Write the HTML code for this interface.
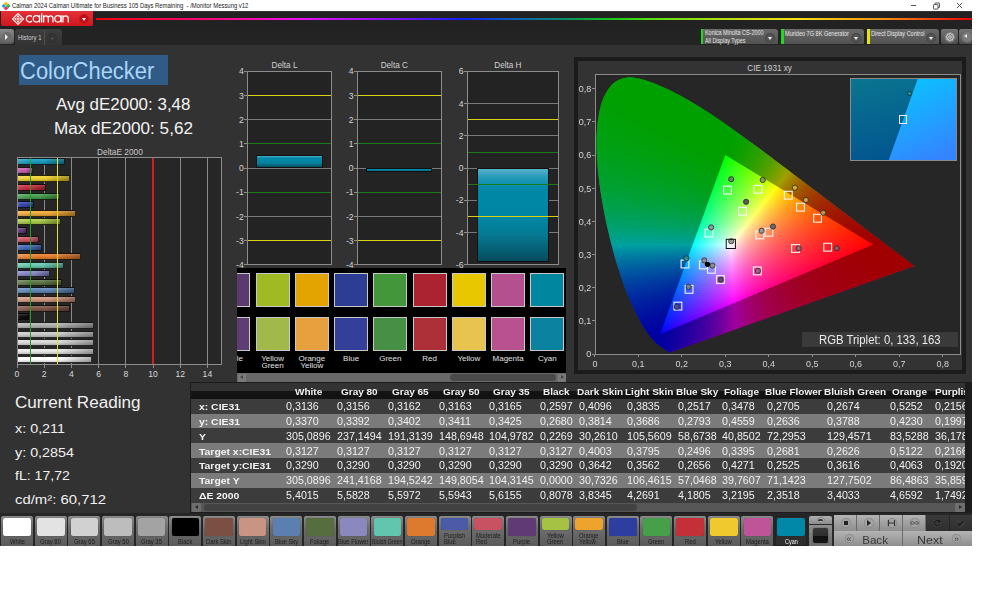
<!DOCTYPE html>
<html><head><meta charset="utf-8">
<style>
*{box-sizing:border-box;margin:0;padding:0}
html,body{width:1000px;height:600px;overflow:hidden;background:#fff;font-family:"Liberation Sans",sans-serif}
.a{position:absolute}
.t{position:absolute;white-space:nowrap;line-height:1;transform-origin:0 0}
#app{position:absolute;left:0;top:0;width:972px;height:546px;overflow:hidden}
.dd{position:absolute;top:29px;height:15.4px;background:linear-gradient(#6a6a6a,#525252);border-radius:0 3px 0 0}
.ddc{position:absolute;width:10px;height:10px;border-radius:50%;background:radial-gradient(#555 40%,#444 70%,#5d5d5d)}
.tri{position:absolute;width:0;height:0;border-left:2.5px solid transparent;border-right:2.5px solid transparent;border-top:3px solid #eee}
.bar{position:absolute;height:7px;border:1px solid rgba(0,0,0,.8)}
.gl{position:absolute;height:1px}
.gv{position:absolute;width:1px}
.sw{position:absolute;top:515.5px;width:32px;height:30.5px;background:linear-gradient(#8c8c8c,#6e6e6e 40%,#5a5a5a);border-radius:2px 2px 0 0}
.swc{position:absolute;left:2.3px;top:2.8px;width:27.5px;height:18.2px;border-radius:2px;box-shadow:0 0 1px rgba(0,0,0,.5)}
.btn{position:absolute;background:linear-gradient(#b4b4b4,#8e8e8e);border-right:1px solid #6a6a6a}
</style></head><body>

<div class="a" style="left:0;top:0;width:1000px;height:11px;background:#fff"></div>
<svg class="a" style="left:1px;top:1px" width="10" height="10" viewBox="0 0 10 10">
<path d="M5 0.5 L7.3 2.8 L5 5 L2.7 2.8Z" fill="#f7c600"/>
<path d="M7.3 2.8 L9.6 5 L7.3 7.3 L5 5Z" fill="#3cb44a"/>
<path d="M5 5 L7.3 7.3 L5 9.6 L2.7 7.3Z" fill="#e8336e"/>
<path d="M2.7 2.8 L5 5 L2.7 7.3 L0.4 5Z" fill="#2aa8e0"/>
</svg>
<div class="t" style="left:11.80px;top:2.00px;font-size:7.2px;color:#202020;transform:scaleX(0.8230);">Calman 2024 Calman Ultimate for Business 105 Days Remaining&nbsp;&nbsp;- /Monitor Messung v12</div>
<div class="a" style="left:911px;top:4.8px;width:4.6px;height:0.9px;background:#555"></div>
<svg class="a" style="left:932px;top:2px" width="9" height="8"><path d="M3 2.6V1.5Q3 1 3.5 1H7Q7.5 1 7.5 1.5V5Q7.5 5.5 7 5.5H6" fill="none" stroke="#444" stroke-width="0.9"/><rect x="1.5" y="2.6" width="4.5" height="4.5" rx="0.6" fill="none" stroke="#444" stroke-width="0.9"/></svg>
<svg class="a" style="left:955.5px;top:2px" width="8" height="7"><path d="M0.8 0.8L6.2 6.2M6.2 0.8L0.8 6.2" stroke="#444" stroke-width="0.9"/></svg>

<div id="app">
<div class="a" style="left:0;top:11px;width:972px;height:535px;background:#323232"></div>
<div class="a" style="left:0;top:11.5px;width:972px;height:17px;background:#222"></div>
<div class="a" style="left:0.5px;top:11.3px;width:92px;height:15.2px;background:linear-gradient(#e23238,#d0161c);border-radius:0 0 2px 2px"></div>
<svg class="a" style="left:11.5px;top:12.9px" width="12" height="12" viewBox="0 0 12 12">
<g transform="rotate(45 6 6)"><rect x="2.1" y="2.1" width="7.8" height="7.8" fill="none" stroke="#fff" stroke-width="1"/>
<rect x="3.2" y="3.2" width="1.8" height="1.8" fill="#fff"/><rect x="7" y="3.2" width="1.8" height="1.8" fill="#fff"/><rect x="3.2" y="7" width="1.8" height="1.8" fill="#fff"/><rect x="7" y="7" width="1.8" height="1.8" fill="#fff"/><rect x="5.1" y="5.1" width="1.8" height="1.8" fill="#fff"/>
<rect x="5.1" y="3.2" width="1.8" height="1.8" fill="#f4c4c4" opacity=".5"/><rect x="3.2" y="5.1" width="1.8" height="1.8" fill="#f4c4c4" opacity=".5"/><rect x="7" y="5.1" width="1.8" height="1.8" fill="#f4c4c4" opacity=".5"/><rect x="5.1" y="7" width="1.8" height="1.8" fill="#f4c4c4" opacity=".5"/>
</g></svg>
<svg class="a" style="left:0;top:0" width="80" height="30"><g fill="none" stroke="#fff" stroke-width="1.2"><path d="M31.9 16.7 A3.2 3.2 0 1 0 31.9 21.0"/><circle cx="36.4" cy="18.85" r="3.2"/><path d="M39.6 15.2V22.5"/><path d="M41.7 13.2V22.5"/><path d="M43.65 15.2V22.5M43.65 18.1A2.325 2.325 0 0 1 48.3 18.1V22.5M48.3 18.1A2.325 2.325 0 0 1 52.95 18.1V22.5"/><circle cx="57.95" cy="18.85" r="3.2"/><path d="M61.15 15.2V22.5"/><path d="M62.95 15.2V22.5M62.95 18.5A2.65 2.65 0 0 1 68.25 18.5V22.5"/></g></svg>
<div class="a" style="left:79px;top:14px;width:10px;height:10px;border-radius:50%;background:radial-gradient(#c01015 50%,#d82a30)"></div>
<div class="tri" style="left:81.5px;top:18px;border-top-color:#fff"></div>
<div class="a" style="left:96px;top:18.2px;width:876px;height:2.3px;background:linear-gradient(90deg,#f00008 0%,#ff0890 15%,#f010f0 23%,#9010ff 33%,#1020ff 42%,#0860b8 48%,#0a8a70 53%,#10c020 58%,#50e010 63%,#b0e010 71%,#f8e010 80%,#f89010 90%,#f00008 100%)"></div>

<div class="a" style="left:0;top:28px;width:972px;height:16.6px;background:#232323"></div>
<div class="a" style="left:0;top:29.2px;width:13.6px;height:14.4px;background:linear-gradient(#8a8a8a,#5a5a5a);border-radius:0 3px 3px 0"></div>
<div class="a" style="left:1.5px;top:31.5px;width:10px;height:10px;border-radius:50%;background:radial-gradient(#6a6a6a 50%,#7a7a7a)"></div>
<div class="a" style="left:5px;top:33.5px;width:0;height:0;border-top:3px solid transparent;border-bottom:3px solid transparent;border-left:3.5px solid #eee"></div>
<div class="a" style="left:15.2px;top:29px;width:46.5px;height:15.6px;background:linear-gradient(#3e3e3e,#343434);border-radius:3px 3px 0 0"></div>
<div class="t" style="left:18.00px;top:34.20px;font-size:7.5px;color:#cfcfcf;transform:scaleX(0.7942);">History 1</div>
<div class="a" style="left:44.3px;top:30px;width:1px;height:14.5px;background:#505050"></div>
<div class="a" style="left:47px;top:33px;width:10px;height:10px;border-radius:50%;background:radial-gradient(#333 50%,#2a2a2a)"></div>
<div class="t" style="left:50.5px;top:35px;font-size:6px;color:#666">+</div>

<div class="dd" style="left:700.5px;width:77.5px"></div>
<div class="a" style="left:700.5px;top:29px;width:2.5px;height:15.4px;background:#22d822"></div>
<div class="t" style="left:704.50px;top:30.30px;font-size:6.6px;color:#e6e6e6;transform:scaleX(0.8219);">Konica Minolta CS-2000</div>
<div class="t" style="left:704.50px;top:38.20px;font-size:6.6px;color:#e6e6e6;transform:scaleX(0.8078);">All Display Types</div>
<div class="ddc" style="left:765px;top:32.6px"></div><div class="tri" style="left:767.5px;top:36.6px"></div>
<div class="dd" style="left:781px;width:82.6px"></div>
<div class="a" style="left:781px;top:29px;width:2.5px;height:15.4px;background:#22d822"></div>
<div class="t" style="left:785.00px;top:30.50px;font-size:6.6px;color:#e6e6e6;transform:scaleX(0.8428);">Murideo 7G 8K Generator</div>
<div class="ddc" style="left:851px;top:32.6px"></div><div class="tri" style="left:853.5px;top:36.6px"></div>
<div class="dd" style="left:867px;width:72.4px"></div>
<div class="a" style="left:867px;top:29px;width:2.5px;height:15.4px;background:#e6e600"></div>
<div class="t" style="left:871.00px;top:30.50px;font-size:6.6px;color:#e6e6e6;transform:scaleX(0.8383);">Direct Display Control</div>
<div class="ddc" style="left:926px;top:32.6px"></div><div class="tri" style="left:928.5px;top:36.6px"></div>
<div class="a" style="left:941px;top:29px;width:17px;height:15px;background:linear-gradient(#747474,#4e4e4e);border-radius:2px"></div>
<div class="a" style="left:943.5px;top:31px;width:12px;height:12px;border-radius:50%;background:radial-gradient(#7a7a7a 50%,#5e5e5e 75%,#7a7a7a)"></div><svg class="a" style="left:944.5px;top:32px" width="10" height="10" viewBox="0 0 10 10"><path d="M8.90 5.00 L8.83 5.76 L7.68 6.11 L7.41 6.61 L7.76 7.76 L7.17 8.24 L6.11 7.68 L5.57 7.84 L5.00 8.90 L4.24 8.83 L3.89 7.68 L3.39 7.41 L2.24 7.76 L1.76 7.17 L2.32 6.11 L2.16 5.57 L1.10 5.00 L1.17 4.24 L2.32 3.89 L2.59 3.39 L2.24 2.24 L2.83 1.76 L3.89 2.32 L4.43 2.16 L5.00 1.10 L5.76 1.17 L6.11 2.32 L6.61 2.59 L7.76 2.24 L8.24 2.83 L7.68 3.89 L7.84 4.43Z" fill="none" stroke="#e0e0e0" stroke-width="0.9"/><circle cx="5" cy="5" r="1.3" fill="none" stroke="#e0e0e0" stroke-width="0.8"/></svg>
<div class="a" style="left:959px;top:29px;width:14px;height:15px;background:linear-gradient(#747474,#4e4e4e);border-radius:2px 0 0 2px"></div>
<div class="a" style="left:960.5px;top:31px;width:12px;height:12px;border-radius:50%;background:radial-gradient(#7a7a7a 50%,#5e5e5e 75%,#7a7a7a)"></div><div class="a" style="left:963.5px;top:34.2px;width:0;height:0;border-top:2.8px solid transparent;border-bottom:2.8px solid transparent;border-right:3.4px solid #e8e8e8"></div>

<div class="a" style="left:19px;top:54.8px;width:148.8px;height:30.1px;background:#2f5b86"></div>
<div class="t" style="left:19.80px;top:59.50px;font-size:23px;color:#a9d5fb;transform:scaleX(0.9558);">ColorChecker</div>
<div class="t" style="left:56.30px;top:97.00px;font-size:15.6px;color:#f2f2f2;transform:scaleX(1.0869);">Avg dE2000: 3,48</div>
<div class="t" style="left:54.20px;top:120.50px;font-size:15.6px;color:#f2f2f2;transform:scaleX(1.0977);">Max dE2000: 5,62</div>
<div class="t" style="left:96.90px;top:147.60px;font-size:9.2px;color:#c8c8c8;transform:scaleX(0.9064);">DeltaE 2000</div>
<div class="a" style="left:17.0px;top:157.5px;width:204.5px;height:207.0px;background:#262626"></div>
<div class="gv" style="left:43.7px;top:157.5px;height:207.0px;background:#8a8a8a"></div>
<div class="gv" style="left:70.9px;top:157.5px;height:207.0px;background:#8a8a8a"></div>
<div class="gv" style="left:98.1px;top:157.5px;height:207.0px;background:#8a8a8a"></div>
<div class="gv" style="left:125.3px;top:157.5px;height:207.0px;background:#8a8a8a"></div>
<div class="gv" style="left:179.7px;top:157.5px;height:207.0px;background:#8a8a8a"></div>
<div class="gv" style="left:206.9px;top:157.5px;height:207.0px;background:#8a8a8a"></div>
<div class="bar" style="left:17.3px;top:158.10px;width:48.0px;border-left:none;background:linear-gradient(rgba(255,255,255,.16),rgba(255,255,255,0) 45%,rgba(0,0,0,.18)),linear-gradient(90deg,color-mix(in srgb,#1a9cc0 85%,#fff),#1a9cc0 30%,#1a9cc0 55%,color-mix(in srgb,#1a9cc0 68%,#000));"></div>
<div class="bar" style="left:17.3px;top:166.72px;width:15.5px;border-left:none;background:linear-gradient(rgba(255,255,255,.16),rgba(255,255,255,0) 45%,rgba(0,0,0,.18)),linear-gradient(90deg,color-mix(in srgb,#c860b0 85%,#fff),#c860b0 30%,#c860b0 55%,color-mix(in srgb,#c860b0 68%,#000));"></div>
<div class="bar" style="left:17.3px;top:175.35px;width:52.5px;border-left:none;background:linear-gradient(rgba(255,255,255,.16),rgba(255,255,255,0) 45%,rgba(0,0,0,.18)),linear-gradient(90deg,color-mix(in srgb,#f0d030 85%,#fff),#f0d030 30%,#f0d030 55%,color-mix(in srgb,#f0d030 68%,#000));"></div>
<div class="bar" style="left:17.3px;top:183.97px;width:28.3px;border-left:none;background:linear-gradient(rgba(255,255,255,.16),rgba(255,255,255,0) 45%,rgba(0,0,0,.18)),linear-gradient(90deg,color-mix(in srgb,#c83040 85%,#fff),#c83040 30%,#c83040 55%,color-mix(in srgb,#c83040 68%,#000));"></div>
<div class="bar" style="left:17.3px;top:192.60px;width:43.0px;border-left:none;background:linear-gradient(rgba(255,255,255,.16),rgba(255,255,255,0) 45%,rgba(0,0,0,.18)),linear-gradient(90deg,color-mix(in srgb,#48a050 85%,#fff),#48a050 30%,#48a050 55%,color-mix(in srgb,#48a050 68%,#000));"></div>
<div class="bar" style="left:17.3px;top:201.22px;width:17.1px;border-left:none;background:linear-gradient(rgba(255,255,255,.16),rgba(255,255,255,0) 45%,rgba(0,0,0,.18)),linear-gradient(90deg,color-mix(in srgb,#3848b0 85%,#fff),#3848b0 30%,#3848b0 55%,color-mix(in srgb,#3848b0 68%,#000));"></div>
<div class="bar" style="left:17.3px;top:209.85px;width:58.7px;border-left:none;background:linear-gradient(rgba(255,255,255,.16),rgba(255,255,255,0) 45%,rgba(0,0,0,.18)),linear-gradient(90deg,color-mix(in srgb,#f0a838 85%,#fff),#f0a838 30%,#f0a838 55%,color-mix(in srgb,#f0a838 68%,#000));"></div>
<div class="bar" style="left:17.3px;top:218.47px;width:43.5px;border-left:none;background:linear-gradient(rgba(255,255,255,.16),rgba(255,255,255,0) 45%,rgba(0,0,0,.18)),linear-gradient(90deg,color-mix(in srgb,#a8c848 85%,#fff),#a8c848 30%,#a8c848 55%,color-mix(in srgb,#a8c848 68%,#000));"></div>
<div class="bar" style="left:17.3px;top:227.10px;width:9.9px;border-left:none;background:linear-gradient(rgba(255,255,255,.16),rgba(255,255,255,0) 45%,rgba(0,0,0,.18)),linear-gradient(90deg,color-mix(in srgb,#684080 85%,#fff),#684080 30%,#684080 55%,color-mix(in srgb,#684080 68%,#000));"></div>
<div class="bar" style="left:17.3px;top:235.72px;width:21.7px;border-left:none;background:linear-gradient(rgba(255,255,255,.16),rgba(255,255,255,0) 45%,rgba(0,0,0,.18)),linear-gradient(90deg,color-mix(in srgb,#d05868 85%,#fff),#d05868 30%,#d05868 55%,color-mix(in srgb,#d05868 68%,#000));"></div>
<div class="bar" style="left:17.3px;top:244.35px;width:24.6px;border-left:none;background:linear-gradient(rgba(255,255,255,.16),rgba(255,255,255,0) 45%,rgba(0,0,0,.18)),linear-gradient(90deg,color-mix(in srgb,#4868b8 85%,#fff),#4868b8 30%,#4868b8 55%,color-mix(in srgb,#4868b8 68%,#000));"></div>
<div class="bar" style="left:17.3px;top:252.97px;width:64.2px;border-left:none;background:linear-gradient(rgba(255,255,255,.16),rgba(255,255,255,0) 45%,rgba(0,0,0,.18)),linear-gradient(90deg,color-mix(in srgb,#e88030 85%,#fff),#e88030 30%,#e88030 55%,color-mix(in srgb,#e88030 68%,#000));"></div>
<div class="bar" style="left:17.3px;top:261.60px;width:47.1px;border-left:none;background:linear-gradient(rgba(255,255,255,.16),rgba(255,255,255,0) 45%,rgba(0,0,0,.18)),linear-gradient(90deg,color-mix(in srgb,#68c8b0 85%,#fff),#68c8b0 30%,#68c8b0 55%,color-mix(in srgb,#68c8b0 68%,#000));"></div>
<div class="bar" style="left:17.3px;top:270.23px;width:32.8px;border-left:none;background:linear-gradient(rgba(255,255,255,.16),rgba(255,255,255,0) 45%,rgba(0,0,0,.18)),linear-gradient(90deg,color-mix(in srgb,#8888c8 85%,#fff),#8888c8 30%,#8888c8 55%,color-mix(in srgb,#8888c8 68%,#000));"></div>
<div class="bar" style="left:17.3px;top:278.85px;width:44.6px;border-left:none;background:linear-gradient(rgba(255,255,255,.16),rgba(255,255,255,0) 45%,rgba(0,0,0,.18)),linear-gradient(90deg,color-mix(in srgb,#607848 85%,#fff),#607848 30%,#607848 55%,color-mix(in srgb,#607848 68%,#000));"></div>
<div class="bar" style="left:17.3px;top:287.48px;width:57.7px;border-left:none;background:linear-gradient(rgba(255,255,255,.16),rgba(255,255,255,0) 45%,rgba(0,0,0,.18)),linear-gradient(90deg,color-mix(in srgb,#6088b8 85%,#fff),#6088b8 30%,#6088b8 55%,color-mix(in srgb,#6088b8 68%,#000));"></div>
<div class="bar" style="left:17.3px;top:296.10px;width:58.9px;border-left:none;background:linear-gradient(rgba(255,255,255,.16),rgba(255,255,255,0) 45%,rgba(0,0,0,.18)),linear-gradient(90deg,color-mix(in srgb,#d09880 85%,#fff),#d09880 30%,#d09880 55%,color-mix(in srgb,#d09880 68%,#000));"></div>
<div class="bar" style="left:17.3px;top:304.73px;width:52.9px;border-left:none;background:linear-gradient(rgba(255,255,255,.16),rgba(255,255,255,0) 45%,rgba(0,0,0,.18)),linear-gradient(90deg,color-mix(in srgb,#805848 85%,#fff),#805848 30%,#805848 55%,color-mix(in srgb,#805848 68%,#000));"></div>
<div class="bar" style="left:17.3px;top:313.35px;width:11.8px;border-left:none;background:linear-gradient(rgba(255,255,255,.16),rgba(255,255,255,0) 45%,rgba(0,0,0,.18)),linear-gradient(90deg,color-mix(in srgb,#111111 85%,#fff),#111111 30%,#111111 55%,color-mix(in srgb,#111111 68%,#000));"></div>
<div class="bar" style="left:17.3px;top:321.98px;width:77.2px;border-left:none;background:linear-gradient(rgba(255,255,255,.16),rgba(255,255,255,0) 45%,rgba(0,0,0,.18)),linear-gradient(90deg,color-mix(in srgb,#b0b0b0 85%,#fff),#b0b0b0 30%,#b0b0b0 55%,color-mix(in srgb,#b0b0b0 68%,#000));"></div>
<div class="bar" style="left:17.3px;top:330.60px;width:76.9px;border-left:none;background:linear-gradient(rgba(255,255,255,.16),rgba(255,255,255,0) 45%,rgba(0,0,0,.18)),linear-gradient(90deg,color-mix(in srgb,#c8c8c8 85%,#fff),#c8c8c8 30%,#c8c8c8 55%,color-mix(in srgb,#c8c8c8 68%,#000));"></div>
<div class="bar" style="left:17.3px;top:339.23px;width:76.9px;border-left:none;background:linear-gradient(rgba(255,255,255,.16),rgba(255,255,255,0) 45%,rgba(0,0,0,.18)),linear-gradient(90deg,color-mix(in srgb,#d8d8d8 85%,#fff),#d8d8d8 30%,#d8d8d8 55%,color-mix(in srgb,#d8d8d8 68%,#000));"></div>
<div class="bar" style="left:17.3px;top:347.85px;width:76.7px;border-left:none;background:linear-gradient(rgba(255,255,255,.16),rgba(255,255,255,0) 45%,rgba(0,0,0,.18)),linear-gradient(90deg,color-mix(in srgb,#e8e8e8 85%,#fff),#e8e8e8 30%,#e8e8e8 55%,color-mix(in srgb,#e8e8e8 68%,#000));"></div>
<div class="bar" style="left:17.3px;top:356.48px;width:74.3px;border-left:none;background:linear-gradient(rgba(255,255,255,.16),rgba(255,255,255,0) 45%,rgba(0,0,0,.18)),linear-gradient(90deg,color-mix(in srgb,#ffffff 85%,#fff),#ffffff 30%,#ffffff 55%,color-mix(in srgb,#ffffff 68%,#000));"></div>
<div class="gv" style="left:29.9px;top:157.5px;height:207.0px;width:1.4px;background:#20a020"></div>
<div class="gv" style="left:57.1px;top:157.5px;height:207.0px;width:1.4px;background:#e8e020"></div>
<div class="gv" style="left:152.3px;top:157.5px;height:207.0px;width:1.4px;background:#d02020"></div>
<div class="a" style="left:16.5px;top:157.0px;width:205.5px;height:208.0px;border:1px solid #8c8c8c;border-left-color:#8c8c8c"></div>
<div class="gv" style="left:16.5px;top:364.5px;height:3px;background:#8c8c8c"></div>
<div class="t" style="left:14.61px;top:370.00px;font-size:8.6px;color:#d8d8d8;">0</div>
<div class="gv" style="left:43.7px;top:364.5px;height:3px;background:#8c8c8c"></div>
<div class="t" style="left:41.81px;top:370.00px;font-size:8.6px;color:#d8d8d8;">2</div>
<div class="gv" style="left:70.9px;top:364.5px;height:3px;background:#8c8c8c"></div>
<div class="t" style="left:69.01px;top:370.00px;font-size:8.6px;color:#d8d8d8;">4</div>
<div class="gv" style="left:98.1px;top:364.5px;height:3px;background:#8c8c8c"></div>
<div class="t" style="left:96.21px;top:370.00px;font-size:8.6px;color:#d8d8d8;">6</div>
<div class="gv" style="left:125.3px;top:364.5px;height:3px;background:#8c8c8c"></div>
<div class="t" style="left:123.41px;top:370.00px;font-size:8.6px;color:#d8d8d8;">8</div>
<div class="gv" style="left:152.5px;top:364.5px;height:3px;background:#8c8c8c"></div>
<div class="t" style="left:148.22px;top:370.00px;font-size:8.6px;color:#d8d8d8;">10</div>
<div class="gv" style="left:179.7px;top:364.5px;height:3px;background:#8c8c8c"></div>
<div class="t" style="left:175.42px;top:370.00px;font-size:8.6px;color:#d8d8d8;">12</div>
<div class="gv" style="left:206.9px;top:364.5px;height:3px;background:#8c8c8c"></div>
<div class="t" style="left:202.62px;top:370.00px;font-size:8.6px;color:#d8d8d8;">14</div>
<div class="t" style="left:14.50px;top:395.00px;font-size:16px;color:#f0f0f0;transform:scaleX(1.0690);">Current Reading</div>
<div class="t" style="left:14.50px;top:421.50px;font-size:13.3px;color:#f0f0f0;transform:scaleX(1.0791);">x: 0,211</div>
<div class="t" style="left:14.50px;top:446.00px;font-size:13.3px;color:#f0f0f0;transform:scaleX(1.0782);">y: 0,2854</div>
<div class="t" style="left:14.50px;top:469.30px;font-size:13.3px;color:#f0f0f0;transform:scaleX(1.0586);">fL: 17,72</div>
<div class="t" style="left:14.50px;top:492.70px;font-size:13.3px;color:#f0f0f0;transform:scaleX(1.1190);">cd/m²: 60,712</div>
<div class="a" style="left:247.4px;top:71.0px;width:84.1px;height:193.60000000000002px;background:#232323"></div>
<div class="gl" style="left:247.4px;top:119.2px;width:84.1px;background:#7a7a7a"></div>
<div class="gl" style="left:247.4px;top:167.6px;width:84.1px;background:#7a7a7a"></div>
<div class="gl" style="left:247.4px;top:216.0px;width:84.1px;background:#7a7a7a"></div>
<div class="a" style="left:256px;top:154.8px;width:66.80000000000001px;height:13.3px;background:linear-gradient(#58b2ca,#2098b8 10%,#0088a6 22%,#0086a4 55%,#067890 72%,#054c5e);border:1px solid #101010"></div>
<div class="gl" style="left:247.4px;top:143.4px;width:84.1px;background:#1c7a1c"></div>
<div class="gl" style="left:247.4px;top:191.8px;width:84.1px;background:#1c7a1c"></div>
<div class="gl" style="left:247.4px;top:94.9px;width:84.1px;height:1.3px;background:#d8d010"></div>
<div class="gl" style="left:247.4px;top:240.1px;width:84.1px;height:1.3px;background:#d8d010"></div>
<div class="a" style="left:246.9px;top:70.5px;width:85.1px;height:194.60000000000002px;border:1px solid #8c8c8c"></div>
<div class="gl" style="left:243.70000000000002px;top:70.8px;width:3.7px;background:#8c8c8c"></div>
<div class="t" style="left:238.92px;top:67.40px;font-size:8.6px;color:#d4d4d4;">4</div>
<div class="gl" style="left:243.70000000000002px;top:95.0px;width:3.7px;background:#8c8c8c"></div>
<div class="t" style="left:238.92px;top:91.60px;font-size:8.6px;color:#d4d4d4;">3</div>
<div class="gl" style="left:243.70000000000002px;top:119.2px;width:3.7px;background:#8c8c8c"></div>
<div class="t" style="left:238.92px;top:115.80px;font-size:8.6px;color:#d4d4d4;">2</div>
<div class="gl" style="left:243.70000000000002px;top:143.4px;width:3.7px;background:#8c8c8c"></div>
<div class="t" style="left:238.92px;top:140.00px;font-size:8.6px;color:#d4d4d4;">1</div>
<div class="gl" style="left:243.70000000000002px;top:167.6px;width:3.7px;background:#8c8c8c"></div>
<div class="t" style="left:238.92px;top:164.20px;font-size:8.6px;color:#d4d4d4;">0</div>
<div class="gl" style="left:243.70000000000002px;top:191.8px;width:3.7px;background:#8c8c8c"></div>
<div class="t" style="left:236.05px;top:188.40px;font-size:8.6px;color:#d4d4d4;">-1</div>
<div class="gl" style="left:243.70000000000002px;top:216.0px;width:3.7px;background:#8c8c8c"></div>
<div class="t" style="left:236.05px;top:212.60px;font-size:8.6px;color:#d4d4d4;">-2</div>
<div class="gl" style="left:243.70000000000002px;top:240.2px;width:3.7px;background:#8c8c8c"></div>
<div class="t" style="left:236.05px;top:236.80px;font-size:8.6px;color:#d4d4d4;">-3</div>
<div class="gl" style="left:243.70000000000002px;top:264.4px;width:3.7px;background:#8c8c8c"></div>
<div class="t" style="left:236.05px;top:261.00px;font-size:8.6px;color:#d4d4d4;">-4</div>
<div class="t" style="left:271.51px;top:62.30px;font-size:8.2px;color:#d0d0d0;">Delta L</div>
<div class="a" style="left:357.3px;top:71.0px;width:84.19999999999999px;height:193.60000000000002px;background:#232323"></div>
<div class="gl" style="left:357.3px;top:119.2px;width:84.19999999999999px;background:#7a7a7a"></div>
<div class="gl" style="left:357.3px;top:167.6px;width:84.19999999999999px;background:#7a7a7a"></div>
<div class="gl" style="left:357.3px;top:216.0px;width:84.19999999999999px;background:#7a7a7a"></div>
<div class="a" style="left:366px;top:168.1px;width:66.39999999999998px;height:4.1px;background:linear-gradient(#58b2ca,#2098b8 10%,#0088a6 22%,#0086a4 55%,#067890 72%,#054c5e);border:1px solid #101010"></div>
<div class="gl" style="left:357.3px;top:143.4px;width:84.19999999999999px;background:#1c7a1c"></div>
<div class="gl" style="left:357.3px;top:191.8px;width:84.19999999999999px;background:#1c7a1c"></div>
<div class="gl" style="left:357.3px;top:94.9px;width:84.19999999999999px;height:1.3px;background:#d8d010"></div>
<div class="gl" style="left:357.3px;top:240.1px;width:84.19999999999999px;height:1.3px;background:#d8d010"></div>
<div class="a" style="left:356.8px;top:70.5px;width:85.19999999999999px;height:194.60000000000002px;border:1px solid #8c8c8c"></div>
<div class="gl" style="left:353.6px;top:70.8px;width:3.7px;background:#8c8c8c"></div>
<div class="t" style="left:348.82px;top:67.40px;font-size:8.6px;color:#d4d4d4;">4</div>
<div class="gl" style="left:353.6px;top:95.0px;width:3.7px;background:#8c8c8c"></div>
<div class="t" style="left:348.82px;top:91.60px;font-size:8.6px;color:#d4d4d4;">3</div>
<div class="gl" style="left:353.6px;top:119.2px;width:3.7px;background:#8c8c8c"></div>
<div class="t" style="left:348.82px;top:115.80px;font-size:8.6px;color:#d4d4d4;">2</div>
<div class="gl" style="left:353.6px;top:143.4px;width:3.7px;background:#8c8c8c"></div>
<div class="t" style="left:348.82px;top:140.00px;font-size:8.6px;color:#d4d4d4;">1</div>
<div class="gl" style="left:353.6px;top:167.6px;width:3.7px;background:#8c8c8c"></div>
<div class="t" style="left:348.82px;top:164.20px;font-size:8.6px;color:#d4d4d4;">0</div>
<div class="gl" style="left:353.6px;top:191.8px;width:3.7px;background:#8c8c8c"></div>
<div class="t" style="left:345.95px;top:188.40px;font-size:8.6px;color:#d4d4d4;">-1</div>
<div class="gl" style="left:353.6px;top:216.0px;width:3.7px;background:#8c8c8c"></div>
<div class="t" style="left:345.95px;top:212.60px;font-size:8.6px;color:#d4d4d4;">-2</div>
<div class="gl" style="left:353.6px;top:240.2px;width:3.7px;background:#8c8c8c"></div>
<div class="t" style="left:345.95px;top:236.80px;font-size:8.6px;color:#d4d4d4;">-3</div>
<div class="gl" style="left:353.6px;top:264.4px;width:3.7px;background:#8c8c8c"></div>
<div class="t" style="left:345.95px;top:261.00px;font-size:8.6px;color:#d4d4d4;">-4</div>
<div class="t" style="left:380.63px;top:62.30px;font-size:8.2px;color:#d0d0d0;">Delta C</div>
<div class="a" style="left:467.2px;top:71.0px;width:91.59999999999997px;height:193.60000000000002px;background:#232323"></div>
<div class="gl" style="left:467.2px;top:103.1px;width:91.59999999999997px;background:#7a7a7a"></div>
<div class="gl" style="left:467.2px;top:135.3px;width:91.59999999999997px;background:#7a7a7a"></div>
<div class="gl" style="left:467.2px;top:167.6px;width:91.59999999999997px;background:#7a7a7a"></div>
<div class="gl" style="left:467.2px;top:199.9px;width:91.59999999999997px;background:#7a7a7a"></div>
<div class="gl" style="left:467.2px;top:232.1px;width:91.59999999999997px;background:#7a7a7a"></div>
<div class="a" style="left:476.5px;top:168.1px;width:72.5px;height:93.9px;background:linear-gradient(#58b2ca,#2098b8 10%,#0088a6 22%,#0086a4 55%,#067890 72%,#054c5e);border:1px solid #101010"></div>
<div class="gl" style="left:467.2px;top:151.5px;width:91.59999999999997px;background:#1c7a1c"></div>
<div class="gl" style="left:467.2px;top:183.7px;width:91.59999999999997px;background:#1c7a1c"></div>
<div class="gl" style="left:467.2px;top:119.1px;width:91.59999999999997px;height:1.3px;background:#d8d010"></div>
<div class="gl" style="left:467.2px;top:215.9px;width:91.59999999999997px;height:1.3px;background:#d8d010"></div>
<div class="a" style="left:466.7px;top:70.5px;width:92.59999999999997px;height:194.60000000000002px;border:1px solid #8c8c8c"></div>
<div class="gl" style="left:463.5px;top:70.8px;width:3.7px;background:#8c8c8c"></div>
<div class="t" style="left:458.72px;top:67.40px;font-size:8.6px;color:#d4d4d4;">6</div>
<div class="gl" style="left:463.5px;top:103.1px;width:3.7px;background:#8c8c8c"></div>
<div class="t" style="left:458.72px;top:99.67px;font-size:8.6px;color:#d4d4d4;">4</div>
<div class="gl" style="left:463.5px;top:135.3px;width:3.7px;background:#8c8c8c"></div>
<div class="t" style="left:458.72px;top:131.93px;font-size:8.6px;color:#d4d4d4;">2</div>
<div class="gl" style="left:463.5px;top:167.6px;width:3.7px;background:#8c8c8c"></div>
<div class="t" style="left:458.72px;top:164.20px;font-size:8.6px;color:#d4d4d4;">0</div>
<div class="gl" style="left:463.5px;top:199.9px;width:3.7px;background:#8c8c8c"></div>
<div class="t" style="left:455.85px;top:196.47px;font-size:8.6px;color:#d4d4d4;">-2</div>
<div class="gl" style="left:463.5px;top:232.1px;width:3.7px;background:#8c8c8c"></div>
<div class="t" style="left:455.85px;top:228.73px;font-size:8.6px;color:#d4d4d4;">-4</div>
<div class="gl" style="left:463.5px;top:264.4px;width:3.7px;background:#8c8c8c"></div>
<div class="t" style="left:455.85px;top:261.00px;font-size:8.6px;color:#d4d4d4;">-6</div>
<div class="t" style="left:494.23px;top:62.30px;font-size:8.2px;color:#d0d0d0;">Delta H</div>
<div class="a" style="left:236.8px;top:268px;width:329.6px;height:105px;background:#000;overflow:hidden">
<div class="a" style="left:-20.45px;top:5px;width:34px;height:34.4px;background:#5b3a70;border:1px solid #c8c8c8"></div>
<div class="a" style="left:-20.45px;top:49px;width:34px;height:34.4px;background:#5e3d75;border:1px solid #c8c8c8"></div>
<div class="t" style="left:-17.01px;top:86.50px;font-size:8px;color:#e0e0e0;">Purple</div>
<div class="a" style="left:18.80px;top:5px;width:34px;height:34.4px;background:#9fba22;border:1px solid #c8c8c8"></div>
<div class="a" style="left:18.80px;top:49px;width:34px;height:34.4px;background:#a1b84a;border:1px solid #c8c8c8"></div>
<div class="t" style="left:24.38px;top:86.50px;font-size:8px;color:#e0e0e0;">Yellow</div>
<div class="t" style="left:24.68px;top:94.20px;font-size:8px;color:#e0e0e0;">Green</div>
<div class="a" style="left:58.05px;top:5px;width:34px;height:34.4px;background:#e3a300;border:1px solid #c8c8c8"></div>
<div class="a" style="left:58.05px;top:49px;width:34px;height:34.4px;background:#e6a03e;border:1px solid #c8c8c8"></div>
<div class="t" style="left:61.71px;top:86.50px;font-size:8px;color:#e0e0e0;">Orange</div>
<div class="t" style="left:63.63px;top:94.20px;font-size:8px;color:#e0e0e0;">Yellow</div>
<div class="a" style="left:97.30px;top:5px;width:34px;height:34.4px;background:#2e3d94;border:1px solid #c8c8c8"></div>
<div class="a" style="left:97.30px;top:49px;width:34px;height:34.4px;background:#343f99;border:1px solid #c8c8c8"></div>
<div class="t" style="left:106.29px;top:86.50px;font-size:8px;color:#e0e0e0;">Blue</div>
<div class="a" style="left:136.55px;top:5px;width:34px;height:34.4px;background:#43963a;border:1px solid #c8c8c8"></div>
<div class="a" style="left:136.55px;top:49px;width:34px;height:34.4px;background:#468f45;border:1px solid #c8c8c8"></div>
<div class="t" style="left:142.43px;top:86.50px;font-size:8px;color:#e0e0e0;">Green</div>
<div class="a" style="left:175.80px;top:5px;width:34px;height:34.4px;background:#ab2230;border:1px solid #c8c8c8"></div>
<div class="a" style="left:175.80px;top:49px;width:34px;height:34.4px;background:#ad3038;border:1px solid #c8c8c8"></div>
<div class="t" style="left:185.46px;top:86.50px;font-size:8px;color:#e0e0e0;">Red</div>
<div class="a" style="left:215.05px;top:5px;width:34px;height:34.4px;background:#e8c600;border:1px solid #c8c8c8"></div>
<div class="a" style="left:215.05px;top:49px;width:34px;height:34.4px;background:#e8c44e;border:1px solid #c8c8c8"></div>
<div class="t" style="left:220.63px;top:86.50px;font-size:8px;color:#e0e0e0;">Yellow</div>
<div class="a" style="left:254.30px;top:5px;width:34px;height:34.4px;background:#b5508f;border:1px solid #c8c8c8"></div>
<div class="a" style="left:254.30px;top:49px;width:34px;height:34.4px;background:#b7528f;border:1px solid #c8c8c8"></div>
<div class="t" style="left:255.73px;top:86.50px;font-size:8px;color:#e0e0e0;">Magenta</div>
<div class="a" style="left:293.55px;top:5px;width:34px;height:34.4px;background:#00869e;border:1px solid #c8c8c8"></div>
<div class="a" style="left:293.55px;top:49px;width:34px;height:34.4px;background:#0b82a0;border:1px solid #c8c8c8"></div>
<div class="t" style="left:301.21px;top:86.50px;font-size:8px;color:#e0e0e0;">Cyan</div>
</div>
<div class="a" style="left:236.8px;top:373px;width:329.6px;height:9px;background:#686868"></div>
<div class="a" style="left:237.6px;top:373.5px;width:8.5px;height:8px;background:#7a7a7a"></div>
<div class="a" style="left:240px;top:375px;width:0;height:0;border-top:2.5px solid transparent;border-bottom:2.5px solid transparent;border-right:3px solid #444"></div>
<div class="a" style="left:450px;top:374px;width:106px;height:7px;background:#4a4a4a;border-radius:3.5px"></div>
<div class="a" style="left:558px;top:373.5px;width:8px;height:8px;background:#7a7a7a"></div>
<div class="a" style="left:561px;top:375px;width:0;height:0;border-top:2.5px solid transparent;border-bottom:2.5px solid transparent;border-left:3px solid #444"></div>
<div class="a" style="left:574px;top:56.7px;width:392px;height:317.5px;background:#1b1b1b"></div>
<div class="a" style="left:578px;top:60.7px;width:384px;height:309.5px;background:#333"></div>
<div class="t" style="left:747.37px;top:64.60px;font-size:8.2px;color:#d0d0d0;">CIE 1931 xy</div>
<div class="a" style="left:595.3px;top:74.4px;width:365.0px;height:279.6px;background:#262626"></div>
<svg class="a" style="left:0;top:0" width="972" height="546"><defs><linearGradient id="hs" x1="0" y1="0" x2="0" y2="1"><stop offset="0" stop-color="#009a00"/><stop offset="0.5" stop-color="#00950a"/><stop offset="0.62" stop-color="#008a80"/><stop offset="0.8" stop-color="#0040a8"/><stop offset="1" stop-color="#3000a0"/></linearGradient><radialGradient id="tg" cx="0.45" cy="0.55" r="0.6"><stop offset="0" stop-color="#fff"/><stop offset="1" stop-color="#ff8040"/></radialGradient><linearGradient id="ol" x1="0" y1="0" x2="1" y2="0.6"><stop offset="0" stop-color="#308a00"/><stop offset="0.45" stop-color="#909000"/><stop offset="1" stop-color="#a00000"/></linearGradient></defs><path d="M670.6 352.3 L670.6 352.3 L670.6 352.3 L670.6 352.3 L670.6 352.3 L670.5 352.3 L670.5 352.3 L670.5 352.3 L670.5 352.4 L670.5 352.4 L670.5 352.4 L670.5 352.4 L670.5 352.4 L670.4 352.4 L670.4 352.4 L670.4 352.4 L670.4 352.4 L670.4 352.4 L670.4 352.4 L670.3 352.4 L670.3 352.4 L670.3 352.4 L670.3 352.4 L670.3 352.4 L670.2 352.4 L670.2 352.4 L670.2 352.4 L670.2 352.4 L670.1 352.4 L670.1 352.4 L670.1 352.4 L670.1 352.4 L670.0 352.4 L670.0 352.4 L670.0 352.4 L670.0 352.4 L669.9 352.4 L669.9 352.4 L669.9 352.4 L669.8 352.4 L669.8 352.4 L669.8 352.4 L669.7 352.4 L669.7 352.4 L669.6 352.4 L669.6 352.4 L669.5 352.4 L669.5 352.3 L669.4 352.3 L669.3 352.3 L669.3 352.2 L669.2 352.2 L669.1 352.2 L669.0 352.1 L668.9 352.1 L668.8 352.0 L668.7 352.0 L668.6 351.9 L668.5 351.9 L668.4 351.8 L668.3 351.7 L668.2 351.6 L668.1 351.5 L667.9 351.5 L667.8 351.4 L667.6 351.3 L667.5 351.1 L667.3 351.0 L667.1 350.9 L666.9 350.8 L666.8 350.7 L666.6 350.5 L666.4 350.4 L666.2 350.2 L665.9 350.1 L665.7 349.9 L665.5 349.8 L665.2 349.6 L664.9 349.4 L664.6 349.2 L664.3 349.0 L664.0 348.8 L663.7 348.6 L663.3 348.4 L663.0 348.1 L662.6 347.9 L662.2 347.6 L661.8 347.4 L661.4 347.1 L661.0 346.8 L660.5 346.5 L660.1 346.1 L659.6 345.8 L659.1 345.4 L658.6 345.0 L658.0 344.6 L657.5 344.2 L656.9 343.7 L656.4 343.2 L655.8 342.7 L655.2 342.1 L654.5 341.5 L653.8 340.8 L653.1 340.0 L652.3 339.1 L651.5 338.2 L650.6 337.2 L649.8 336.1 L648.8 334.8 L647.9 333.5 L646.9 332.1 L645.9 330.6 L644.8 329.0 L643.7 327.2 L642.5 325.2 L641.3 323.1 L640.1 320.8 L638.8 318.4 L637.4 315.8 L636.0 313.0 L634.6 310.0 L633.1 306.8 L631.5 303.3 L629.8 299.7 L628.1 295.9 L626.4 291.8 L624.8 287.4 L623.1 282.8 L621.4 278.0 L619.7 272.8 L618.0 267.5 L616.3 261.9 L614.6 256.2 L613.0 250.2 L611.3 243.8 L609.7 237.3 L608.1 230.6 L606.5 223.9 L605.1 217.1 L603.8 210.3 L602.5 203.3 L601.3 196.3 L600.2 189.2 L599.3 182.3 L598.5 175.5 L597.8 168.8 L597.3 162.1 L596.8 155.5 L596.6 149.1 L596.5 142.9 L596.6 136.9 L596.9 131.1 L597.3 125.4 L598.0 119.9 L598.8 114.7 L599.8 109.8 L600.9 105.2 L602.3 101.0 L603.9 97.1 L605.7 93.5 L607.6 90.2 L609.7 87.3 L611.8 84.7 L614.1 82.7 L616.5 81.0 L619.1 79.7 L621.8 78.7 L624.5 78.0 L627.2 77.5 L630.0 77.3 L632.8 77.5 L635.7 77.9 L638.7 78.5 L641.6 79.3 L644.5 80.0 L647.5 80.9 L650.4 81.9 L653.4 83.1 L656.3 84.3 L659.3 85.5 L662.1 86.8 L665.0 88.0 L667.8 89.3 L670.6 90.6 L673.3 92.0 L676.0 93.4 L678.8 94.8 L681.5 96.3 L684.1 97.7 L686.8 99.2 L689.4 100.8 L692.1 102.3 L694.7 103.9 L697.3 105.5 L700.0 107.1 L702.6 108.8 L705.2 110.4 L707.8 112.1 L710.4 113.8 L713.0 115.5 L715.6 117.3 L718.2 119.1 L720.8 120.8 L723.4 122.6 L726.0 124.4 L728.6 126.2 L731.2 128.1 L733.8 129.9 L736.3 131.8 L738.9 133.6 L741.5 135.5 L744.1 137.4 L746.7 139.3 L749.3 141.2 L751.9 143.1 L754.5 145.0 L757.1 146.9 L759.7 148.8 L762.3 150.8 L764.8 152.7 L767.4 154.6 L770.0 156.6 L772.6 158.5 L775.1 160.4 L777.7 162.4 L780.3 164.3 L782.8 166.2 L785.4 168.1 L788.0 170.1 L790.5 172.0 L793.0 173.9 L795.5 175.8 L798.0 177.7 L800.5 179.6 L803.0 181.5 L805.5 183.4 L808.0 185.3 L810.4 187.1 L812.9 189.0 L815.3 190.8 L817.7 192.6 L820.1 194.5 L822.4 196.3 L824.8 198.1 L827.1 199.8 L829.4 201.6 L831.7 203.3 L834.0 205.0 L836.2 206.7 L838.5 208.4 L840.7 210.1 L842.8 211.7 L844.9 213.3 L847.0 214.9 L849.1 216.5 L851.1 218.1 L853.1 219.6 L855.1 221.1 L857.0 222.5 L858.8 223.9 L860.6 225.3 L862.4 226.6 L864.1 227.9 L865.8 229.2 L867.5 230.5 L869.1 231.7 L870.7 232.9 L872.2 234.1 L873.8 235.3 L875.2 236.4 L876.7 237.5 L878.1 238.5 L879.4 239.5 L880.7 240.5 L881.9 241.4 L883.1 242.4 L884.3 243.2 L885.5 244.1 L886.5 244.9 L887.6 245.7 L888.6 246.5 L889.6 247.3 L890.5 248.0 L891.4 248.7 L892.3 249.3 L893.2 250.0 L894.0 250.6 L894.7 251.2 L895.5 251.8 L896.2 252.3 L896.9 252.8 L897.6 253.3 L898.2 253.8 L898.8 254.3 L899.5 254.8 L900.0 255.2 L900.6 255.6 L901.1 256.0 L901.6 256.4 L902.1 256.8 L902.6 257.2 L903.1 257.5 L903.6 257.9 L904.0 258.2 L904.4 258.6 L904.9 258.9 L905.3 259.2 L905.7 259.5 L906.1 259.8 L906.4 260.1 L906.8 260.3 L907.1 260.6 L907.4 260.9 L907.8 261.1 L908.1 261.3 L908.4 261.5 L908.7 261.8 L908.9 262.0 L909.2 262.1 L909.4 262.3 L909.6 262.5 L909.8 262.6 L910.0 262.8 L910.3 263.0 L910.5 263.1 L910.8 263.3 L911.0 263.6 L911.4 263.8 L911.7 264.0 L912.0 264.3 L912.2 264.5 L912.5 264.7 L912.8 264.9 L913.0 265.1 L913.3 265.3 L913.5 265.5 L913.7 265.6 L913.9 265.7 L914.0 265.8 L914.1 265.9 L914.2 265.9 L914.2 266.0 L914.3 266.0Z" fill="url(#hs)"/><path d="M725.3 155.0 L694.7 103.9 L757.1 146.9 L817.7 192.6 L867.5 230.5 L914.3 266.0 L873.1 244.6Z" fill="url(#ol)"/><path d="M873.1 244.6 L914.3 266.0 L670.6 352.3 L660.1 334.1Z" fill="#a00030"/><path d="M725.3 155.0 L873.1 244.6 L660.1 334.1Z" fill="url(#tg)"/></svg>
<canvas id="cie" class="a" style="left:595px;top:74px" width="366" height="281"></canvas>
<script>
(function(){
var c=document.getElementById('cie'),g=c.getContext('2d'),W=366,H=281;
var im=g.createImageData(W,H),d=im.data;
function col(px,py,o){
 var x=(px-594.9)/434.7,y=(354.0-py)/331.6;
 if(y<0.002)y=0.002;
 var X=x/y,Y=1,Z=(1-x-y)/y;
 var r=3.2406*X-1.5372*Y-0.4986*Z,gg=-0.9689*X+1.8758*Y+0.0415*Z,b=0.0557*X-0.2040*Y+1.0570*Z;
 var ins=(r>=0&&gg>=0&&b>=0);
 if(r<0)r=0;if(gg<0)gg=0;if(b<0)b=0;
 var m=Math.max(r,gg,b);r/=m;gg/=m;b/=m;
 if(ins){o[0]+=Math.pow(r,0.85)*255;o[1]+=Math.pow(gg,0.85)*255;o[2]+=Math.pow(b,0.85)*255;}
 else{o[0]+=Math.pow(r,1.3)*160;o[1]+=Math.pow(gg,1.3)*160;o[2]+=Math.pow(b,1.3)*160;}
}
var o=[0,0,0];
for(var j=0;j<H;j++)for(var i=0;i<W;i++){
 o[0]=o[1]=o[2]=0;
 for(var sy=0;sy<3;sy++)for(var sx=0;sx<3;sx++)col(i+595+(sx+0.5)/3,j+74+(sy+0.5)/3,o);
 var k=(j*W+i)*4;
 d[k]=o[0]/9;d[k+1]=o[1]/9;d[k+2]=o[2]/9;d[k+3]=255;
}
g.putImageData(im,0,0);
g.globalCompositeOperation='destination-in';
var P=[[75.6,278.3],[75.6,278.3],[75.6,278.3],[75.6,278.3],[75.6,278.3],[75.5,278.3],[75.5,278.3],[75.5,278.3],[75.5,278.4],[75.5,278.4],[75.5,278.4],[75.5,278.4],[75.5,278.4],[75.4,278.4],[75.4,278.4],[75.4,278.4],[75.4,278.4],[75.4,278.4],[75.4,278.4],[75.3,278.4],[75.3,278.4],[75.3,278.4],[75.3,278.4],[75.3,278.4],[75.2,278.4],[75.2,278.4],[75.2,278.4],[75.2,278.4],[75.1,278.4],[75.1,278.4],[75.1,278.4],[75.1,278.4],[75.0,278.4],[75.0,278.4],[75.0,278.4],[75.0,278.4],[74.9,278.4],[74.9,278.4],[74.9,278.4],[74.8,278.4],[74.8,278.4],[74.8,278.4],[74.7,278.4],[74.7,278.4],[74.6,278.4],[74.6,278.4],[74.5,278.4],[74.5,278.3],[74.4,278.3],[74.3,278.3],[74.3,278.2],[74.2,278.2],[74.1,278.2],[74.0,278.1],[73.9,278.1],[73.8,278.0],[73.7,278.0],[73.6,277.9],[73.5,277.9],[73.4,277.8],[73.3,277.7],[73.2,277.6],[73.1,277.5],[72.9,277.5],[72.8,277.4],[72.6,277.3],[72.5,277.1],[72.3,277.0],[72.1,276.9],[71.9,276.8],[71.8,276.7],[71.6,276.5],[71.4,276.4],[71.2,276.2],[70.9,276.1],[70.7,275.9],[70.5,275.8],[70.2,275.6],[69.9,275.4],[69.6,275.2],[69.3,275.0],[69.0,274.8],[68.7,274.6],[68.3,274.4],[68.0,274.1],[67.6,273.9],[67.2,273.6],[66.8,273.4],[66.4,273.1],[66.0,272.8],[65.5,272.5],[65.1,272.1],[64.6,271.8],[64.1,271.4],[63.6,271.0],[63.0,270.6],[62.5,270.2],[61.9,269.7],[61.4,269.2],[60.8,268.7],[60.2,268.1],[59.5,267.5],[58.8,266.8],[58.1,266.0],[57.3,265.1],[56.5,264.2],[55.6,263.2],[54.8,262.1],[53.8,260.8],[52.9,259.5],[51.9,258.1],[50.9,256.6],[49.8,255.0],[48.7,253.2],[47.5,251.2],[46.3,249.1],[45.1,246.8],[43.8,244.4],[42.4,241.8],[41.0,239.0],[39.6,236.0],[38.1,232.8],[36.5,229.3],[34.8,225.7],[33.1,221.9],[31.4,217.8],[29.8,213.4],[28.1,208.8],[26.4,204.0],[24.7,198.8],[23.0,193.5],[21.3,187.9],[19.6,182.2],[18.0,176.2],[16.3,169.8],[14.7,163.3],[13.1,156.6],[11.5,149.9],[10.1,143.1],[8.8,136.3],[7.5,129.3],[6.3,122.3],[5.2,115.2],[4.3,108.3],[3.5,101.5],[2.8,94.8],[2.3,88.1],[1.8,81.5],[1.6,75.1],[1.5,68.9],[1.6,62.9],[1.9,57.1],[2.3,51.4],[3.0,45.9],[3.8,40.7],[4.8,35.8],[5.9,31.2],[7.3,27.0],[8.9,23.1],[10.7,19.5],[12.6,16.2],[14.7,13.3],[16.8,10.7],[19.1,8.7],[21.5,7.0],[24.1,5.7],[26.8,4.7],[29.5,4.0],[32.2,3.5],[35.0,3.3],[37.8,3.5],[40.7,3.9],[43.7,4.5],[46.6,5.3],[49.5,6.0],[52.5,6.9],[55.4,7.9],[58.4,9.1],[61.3,10.3],[64.3,11.5],[67.1,12.8],[70.0,14.0],[72.8,15.3],[75.6,16.6],[78.3,18.0],[81.0,19.4],[83.8,20.8],[86.5,22.3],[89.1,23.7],[91.8,25.2],[94.4,26.8],[97.1,28.3],[99.7,29.9],[102.3,31.5],[105.0,33.1],[107.6,34.8],[110.2,36.4],[112.8,38.1],[115.4,39.8],[118.0,41.5],[120.6,43.3],[123.2,45.1],[125.8,46.8],[128.4,48.6],[131.0,50.4],[133.6,52.2],[136.2,54.1],[138.8,55.9],[141.3,57.8],[143.9,59.6],[146.5,61.5],[149.1,63.4],[151.7,65.3],[154.3,67.2],[156.9,69.1],[159.5,71.0],[162.1,72.9],[164.7,74.8],[167.3,76.8],[169.8,78.7],[172.4,80.6],[175.0,82.6],[177.6,84.5],[180.1,86.4],[182.7,88.4],[185.3,90.3],[187.8,92.2],[190.4,94.1],[193.0,96.1],[195.5,98.0],[198.0,99.9],[200.5,101.8],[203.0,103.7],[205.5,105.6],[208.0,107.5],[210.5,109.4],[213.0,111.3],[215.4,113.1],[217.9,115.0],[220.3,116.8],[222.7,118.6],[225.1,120.5],[227.4,122.3],[229.8,124.1],[232.1,125.8],[234.4,127.6],[236.7,129.3],[239.0,131.0],[241.2,132.7],[243.5,134.4],[245.7,136.1],[247.8,137.7],[249.9,139.3],[252.0,140.9],[254.1,142.5],[256.1,144.1],[258.1,145.6],[260.1,147.1],[262.0,148.5],[263.8,149.9],[265.6,151.3],[267.4,152.6],[269.1,153.9],[270.8,155.2],[272.5,156.5],[274.1,157.7],[275.7,158.9],[277.2,160.1],[278.8,161.3],[280.2,162.4],[281.7,163.5],[283.1,164.5],[284.4,165.5],[285.7,166.5],[286.9,167.4],[288.1,168.4],[289.3,169.2],[290.5,170.1],[291.5,170.9],[292.6,171.7],[293.6,172.5],[294.6,173.3],[295.5,174.0],[296.4,174.7],[297.3,175.3],[298.2,176.0],[299.0,176.6],[299.7,177.2],[300.5,177.8],[301.2,178.3],[301.9,178.8],[302.6,179.3],[303.2,179.8],[303.8,180.3],[304.5,180.8],[305.0,181.2],[305.6,181.6],[306.1,182.0],[306.6,182.4],[307.1,182.8],[307.6,183.2],[308.1,183.5],[308.6,183.9],[309.0,184.2],[309.4,184.6],[309.9,184.9],[310.3,185.2],[310.7,185.5],[311.1,185.8],[311.4,186.1],[311.8,186.3],[312.1,186.6],[312.4,186.9],[312.8,187.1],[313.1,187.3],[313.4,187.5],[313.7,187.8],[313.9,188.0],[314.2,188.1],[314.4,188.3],[314.6,188.5],[314.8,188.6],[315.0,188.8],[315.3,189.0],[315.5,189.1],[315.8,189.3],[316.0,189.6],[316.4,189.8],[316.7,190.0],[317.0,190.3],[317.2,190.5],[317.5,190.7],[317.8,190.9],[318.0,191.1],[318.3,191.3],[318.5,191.5],[318.7,191.6],[318.9,191.7],[319.0,191.8],[319.1,191.9],[319.2,191.9],[319.2,192.0],[319.3,192.0]];
g.beginPath();g.moveTo(P[0][0],P[0][1]);for(var q=1;q<P.length;q++)g.lineTo(P[q][0],P[q][1]);g.closePath();g.fill();
})();
</script>
<div class="a" style="left:594.8px;top:73.9px;width:366.0px;height:281.20000000000005px;border:1px solid #8c8c8c"></div>
<div class="gv" style="left:594.4px;top:354.0px;height:3px;background:#8c8c8c"></div>
<div class="t" style="left:592.40px;top:359.80px;font-size:9px;color:#d4d4d4;">0</div>
<div class="gl" style="left:591.5999999999999px;top:353.5px;width:3.7px;background:#8c8c8c"></div>
<div class="t" style="left:586.29px;top:350.30px;font-size:9px;color:#d4d4d4;">0</div>
<div class="gv" style="left:637.9px;top:354.0px;height:3px;background:#8c8c8c"></div>
<div class="t" style="left:632.11px;top:359.80px;font-size:9px;color:#d4d4d4;">0,1</div>
<div class="gl" style="left:591.5999999999999px;top:320.3px;width:3.7px;background:#8c8c8c"></div>
<div class="t" style="left:578.79px;top:317.14px;font-size:9px;color:#d4d4d4;">0,1</div>
<div class="gv" style="left:681.3px;top:354.0px;height:3px;background:#8c8c8c"></div>
<div class="t" style="left:675.58px;top:359.80px;font-size:9px;color:#d4d4d4;">0,2</div>
<div class="gl" style="left:591.5999999999999px;top:287.2px;width:3.7px;background:#8c8c8c"></div>
<div class="t" style="left:578.79px;top:283.98px;font-size:9px;color:#d4d4d4;">0,2</div>
<div class="gv" style="left:724.8px;top:354.0px;height:3px;background:#8c8c8c"></div>
<div class="t" style="left:719.05px;top:359.80px;font-size:9px;color:#d4d4d4;">0,3</div>
<div class="gl" style="left:591.5999999999999px;top:254.0px;width:3.7px;background:#8c8c8c"></div>
<div class="t" style="left:578.79px;top:250.82px;font-size:9px;color:#d4d4d4;">0,3</div>
<div class="gv" style="left:768.3px;top:354.0px;height:3px;background:#8c8c8c"></div>
<div class="t" style="left:762.52px;top:359.80px;font-size:9px;color:#d4d4d4;">0,4</div>
<div class="gl" style="left:591.5999999999999px;top:220.9px;width:3.7px;background:#8c8c8c"></div>
<div class="t" style="left:578.79px;top:217.66px;font-size:9px;color:#d4d4d4;">0,4</div>
<div class="gv" style="left:811.8px;top:354.0px;height:3px;background:#8c8c8c"></div>
<div class="t" style="left:805.99px;top:359.80px;font-size:9px;color:#d4d4d4;">0,5</div>
<div class="gl" style="left:591.5999999999999px;top:187.7px;width:3.7px;background:#8c8c8c"></div>
<div class="t" style="left:578.79px;top:184.50px;font-size:9px;color:#d4d4d4;">0,5</div>
<div class="gv" style="left:855.2px;top:354.0px;height:3px;background:#8c8c8c"></div>
<div class="t" style="left:849.46px;top:359.80px;font-size:9px;color:#d4d4d4;">0,6</div>
<div class="gl" style="left:591.5999999999999px;top:154.5px;width:3.7px;background:#8c8c8c"></div>
<div class="t" style="left:578.79px;top:151.34px;font-size:9px;color:#d4d4d4;">0,6</div>
<div class="gv" style="left:898.7px;top:354.0px;height:3px;background:#8c8c8c"></div>
<div class="t" style="left:892.93px;top:359.80px;font-size:9px;color:#d4d4d4;">0,7</div>
<div class="gl" style="left:591.5999999999999px;top:121.4px;width:3.7px;background:#8c8c8c"></div>
<div class="t" style="left:578.79px;top:118.18px;font-size:9px;color:#d4d4d4;">0,7</div>
<div class="gv" style="left:942.2px;top:354.0px;height:3px;background:#8c8c8c"></div>
<div class="t" style="left:936.40px;top:359.80px;font-size:9px;color:#d4d4d4;">0,8</div>
<div class="gl" style="left:591.5999999999999px;top:88.2px;width:3.7px;background:#8c8c8c"></div>
<div class="t" style="left:578.79px;top:85.02px;font-size:9px;color:#d4d4d4;">0,8</div>
<svg class="a" style="left:0;top:0" width="972" height="546"><rect x="726.93" y="240.00" width="7.8" height="7.8" fill="none" stroke="#f4f4f4" stroke-width="1.1"/><rect x="765.01" y="228.33" width="7.8" height="7.8" fill="none" stroke="#f4f4f4" stroke-width="1.1"/><rect x="755.97" y="230.98" width="7.8" height="7.8" fill="none" stroke="#f4f4f4" stroke-width="1.1"/><rect x="699.50" y="261.03" width="7.8" height="7.8" fill="none" stroke="#f4f4f4" stroke-width="1.1"/><rect x="738.58" y="207.47" width="7.8" height="7.8" fill="none" stroke="#f4f4f4" stroke-width="1.1"/><rect x="707.54" y="265.37" width="7.8" height="7.8" fill="none" stroke="#f4f4f4" stroke-width="1.1"/><rect x="705.15" y="229.19" width="7.8" height="7.8" fill="none" stroke="#f4f4f4" stroke-width="1.1"/><rect x="813.65" y="214.37" width="7.8" height="7.8" fill="none" stroke="#f4f4f4" stroke-width="1.1"/><rect x="685.16" y="285.43" width="7.8" height="7.8" fill="none" stroke="#f4f4f4" stroke-width="1.1"/><rect x="754.20" y="185.40" width="7.8" height="7.8" fill="none" stroke="#f4f4f4" stroke-width="1.1"/><rect x="723.60" y="186.20" width="7.8" height="7.8" fill="none" stroke="#f4f4f4" stroke-width="1.1"/><rect x="784.40" y="191.30" width="7.8" height="7.8" fill="none" stroke="#f4f4f4" stroke-width="1.1"/><rect x="796.60" y="203.30" width="7.8" height="7.8" fill="none" stroke="#f4f4f4" stroke-width="1.1"/><rect x="823.80" y="243.30" width="7.8" height="7.8" fill="none" stroke="#f4f4f4" stroke-width="1.1"/><rect x="791.60" y="244.60" width="7.8" height="7.8" fill="none" stroke="#f4f4f4" stroke-width="1.1"/><rect x="753.40" y="267.00" width="7.8" height="7.8" fill="none" stroke="#f4f4f4" stroke-width="1.1"/><rect x="716.60" y="275.60" width="7.8" height="7.8" fill="none" stroke="#f4f4f4" stroke-width="1.1"/><rect x="681.10" y="260.10" width="7.8" height="7.8" fill="none" stroke="#f4f4f4" stroke-width="1.1"/><rect x="674.00" y="302.20" width="7.8" height="7.8" fill="none" stroke="#f4f4f4" stroke-width="1.1"/><circle cx="731.22" cy="241.25" r="2.6" fill="#9a9a9a" stroke="#2a2a2a" stroke-width="0.8"/><circle cx="772.95" cy="226.53" r="2.6" fill="#6a6a6a" stroke="#2a2a2a" stroke-width="0.8"/><circle cx="761.61" cy="230.77" r="2.6" fill="#9a9a9a" stroke="#2a2a2a" stroke-width="0.8"/><circle cx="704.31" cy="260.38" r="2.6" fill="#8a8a9a" stroke="#2a2a2a" stroke-width="0.8"/><circle cx="746.09" cy="201.82" r="2.6" fill="#5a5a5a" stroke="#2a2a2a" stroke-width="0.8"/><circle cx="712.49" cy="265.59" r="2.6" fill="#8a8a9a" stroke="#2a2a2a" stroke-width="0.8"/><circle cx="711.14" cy="227.39" r="2.6" fill="#80a0a0" stroke="#2a2a2a" stroke-width="0.8"/><circle cx="823.20" cy="212.73" r="2.6" fill="#c09040" stroke="#2a2a2a" stroke-width="0.8"/><circle cx="688.62" cy="286.78" r="2.6" fill="#7080a0" stroke="#2a2a2a" stroke-width="0.8"/><circle cx="762.70" cy="180.00" r="2.6" fill="#8aa050" stroke="#2a2a2a" stroke-width="0.8"/><circle cx="731.20" cy="179.20" r="2.6" fill="#608a60" stroke="#2a2a2a" stroke-width="0.8"/><circle cx="794.90" cy="187.70" r="2.6" fill="#d0b030" stroke="#2a2a2a" stroke-width="0.8"/><circle cx="805.90" cy="200.00" r="2.6" fill="#d0a040" stroke="#2a2a2a" stroke-width="0.8"/><circle cx="836.80" cy="248.30" r="2.6" fill="#a05060" stroke="#2a2a2a" stroke-width="0.8"/><circle cx="798.70" cy="248.30" r="2.6" fill="#a06070" stroke="#2a2a2a" stroke-width="0.8"/><circle cx="757.90" cy="270.90" r="2.6" fill="#a06090" stroke="#2a2a2a" stroke-width="0.8"/><circle cx="720.80" cy="279.70" r="2.6" fill="#604870" stroke="#2a2a2a" stroke-width="0.8"/><circle cx="686.40" cy="258.40" r="2.6" fill="#308aa0" stroke="#2a2a2a" stroke-width="0.8"/><circle cx="676.80" cy="306.70" r="2.6" fill="#4050a0" stroke="#2a2a2a" stroke-width="0.8"/><circle cx="707.5" cy="264.3" r="2.6" fill="#000"/><rect x="726.23" y="239.30" width="9.2" height="9.2" fill="none" stroke="#111" stroke-width="1"/></svg>
<div class="a" style="left:849.8px;top:77.5px;width:107.4px;height:83.8px;background:#8a8a8a"></div>
<svg class="a" style="left:850.8px;top:78.5px" width="105.4" height="81.8" viewBox="0 0 105.4 81.8"><defs><linearGradient id="ig1" x1="0" y1="0" x2="0.3" y2="1"><stop offset="0" stop-color="#0a7590"/><stop offset="1" stop-color="#02558f"/></linearGradient><linearGradient id="ig2" x1="0.3" y1="0" x2="0.7" y2="1"><stop offset="0" stop-color="#0ac2ff"/><stop offset="1" stop-color="#3583ff"/></linearGradient></defs><rect width="105.4" height="81.8" fill="url(#ig1)"/><path d="M66.7 0 L105.4 0 L105.4 81.8 L37.5 81.8Z" fill="url(#ig2)"/></svg>
<div class="a" style="left:898.6px;top:115.3px;width:8.6px;height:8.6px;border:1.1px solid #f0f0f0"></div>
<div class="a" style="left:906.8px;top:90.6px;width:5.5px;height:5.5px;border-radius:50%;background:#10a0b0;border:0.9px solid #203030"></div>
<div class="a" style="left:801.5px;top:331.5px;width:156.5px;height:15.3px;background:#3a3a3a"></div>
<div class="t" style="left:819.20px;top:333.50px;font-size:12px;color:#ececec;transform:scaleX(0.9446);">RGB Triplet: 0, 133, 163</div>
<div class="a" style="left:190px;top:382px;width:782px;height:133.5px;background:#1c1c1c"></div>
<div class="a" style="left:191.2px;top:383.2px;width:774.1px;height:7.6px;background:#333"></div>
<div class="a" style="left:191.2px;top:390.8px;width:774.1px;height:8px;background:#131313"></div>
<div class="a" style="left:191.2px;top:383px;width:774.1px;height:130px;overflow:hidden">
<div class="a" style="left:0;top:15.80px;width:774.1px;height:14.94px;background:#3c3c3c"></div>
<div class="a" style="left:0;top:30.64px;width:774.1px;height:14.94px;background:#7b7b7b"></div>
<div class="a" style="left:0;top:45.48px;width:774.1px;height:14.94px;background:#3c3c3c"></div>
<div class="a" style="left:0;top:60.32px;width:774.1px;height:14.94px;background:#7b7b7b"></div>
<div class="a" style="left:0;top:75.16px;width:774.1px;height:14.94px;background:#3c3c3c"></div>
<div class="a" style="left:0;top:90.00px;width:774.1px;height:14.94px;background:#7b7b7b"></div>
<div class="a" style="left:0;top:104.84px;width:774.1px;height:14.94px;background:#3c3c3c"></div>
<div class="t" style="left:8.30px;top:20.10px;font-size:9px;color:#f4f4f4;font-weight:bold;transform:scaleX(1.1544);">x: CIE31</div>
<div class="t" style="left:95.20px;top:19.10px;font-size:10px;color:#f0f0f0;transform:scaleX(1.0724);">0,3136</div>
<div class="t" style="left:145.60px;top:19.10px;font-size:10px;color:#f0f0f0;transform:scaleX(1.0724);">0,3156</div>
<div class="t" style="left:196.80px;top:19.10px;font-size:10px;color:#f0f0f0;transform:scaleX(1.0724);">0,3162</div>
<div class="t" style="left:247.60px;top:19.10px;font-size:10px;color:#f0f0f0;transform:scaleX(1.0724);">0,3163</div>
<div class="t" style="left:298.00px;top:19.10px;font-size:10px;color:#f0f0f0;transform:scaleX(1.0724);">0,3165</div>
<div class="t" style="left:349.20px;top:19.10px;font-size:10px;color:#f0f0f0;transform:scaleX(1.0724);">0,2597</div>
<div class="t" style="left:387.80px;top:19.10px;font-size:10px;color:#f0f0f0;transform:scaleX(1.0724);">0,4096</div>
<div class="t" style="left:435.80px;top:19.10px;font-size:10px;color:#f0f0f0;transform:scaleX(1.0724);">0,3835</div>
<div class="t" style="left:486.80px;top:19.10px;font-size:10px;color:#f0f0f0;transform:scaleX(1.0724);">0,2517</div>
<div class="t" style="left:531.20px;top:19.10px;font-size:10px;color:#f0f0f0;transform:scaleX(1.0724);">0,3478</div>
<div class="t" style="left:575.90px;top:19.10px;font-size:10px;color:#f0f0f0;transform:scaleX(1.0724);">0,2705</div>
<div class="t" style="left:635.50px;top:19.10px;font-size:10px;color:#f0f0f0;transform:scaleX(1.0724);">0,2674</div>
<div class="t" style="left:698.80px;top:19.10px;font-size:10px;color:#f0f0f0;transform:scaleX(1.0724);">0,5252</div>
<div class="t" style="left:744.00px;top:19.10px;font-size:10px;color:#f0f0f0;transform:scaleX(1.0724);">0,2156</div>
<div class="t" style="left:8.30px;top:34.94px;font-size:9px;color:#f4f4f4;font-weight:bold;transform:scaleX(1.1544);">y: CIE31</div>
<div class="t" style="left:95.20px;top:33.94px;font-size:10px;color:#f0f0f0;transform:scaleX(1.0724);">0,3370</div>
<div class="t" style="left:145.60px;top:33.94px;font-size:10px;color:#f0f0f0;transform:scaleX(1.0724);">0,3392</div>
<div class="t" style="left:196.80px;top:33.94px;font-size:10px;color:#f0f0f0;transform:scaleX(1.0724);">0,3402</div>
<div class="t" style="left:247.60px;top:33.94px;font-size:10px;color:#f0f0f0;transform:scaleX(1.0724);">0,3411</div>
<div class="t" style="left:298.00px;top:33.94px;font-size:10px;color:#f0f0f0;transform:scaleX(1.0724);">0,3425</div>
<div class="t" style="left:349.20px;top:33.94px;font-size:10px;color:#f0f0f0;transform:scaleX(1.0724);">0,2680</div>
<div class="t" style="left:387.80px;top:33.94px;font-size:10px;color:#f0f0f0;transform:scaleX(1.0724);">0,3814</div>
<div class="t" style="left:435.80px;top:33.94px;font-size:10px;color:#f0f0f0;transform:scaleX(1.0724);">0,3686</div>
<div class="t" style="left:486.80px;top:33.94px;font-size:10px;color:#f0f0f0;transform:scaleX(1.0724);">0,2793</div>
<div class="t" style="left:531.20px;top:33.94px;font-size:10px;color:#f0f0f0;transform:scaleX(1.0724);">0,4559</div>
<div class="t" style="left:575.90px;top:33.94px;font-size:10px;color:#f0f0f0;transform:scaleX(1.0724);">0,2636</div>
<div class="t" style="left:635.50px;top:33.94px;font-size:10px;color:#f0f0f0;transform:scaleX(1.0724);">0,3788</div>
<div class="t" style="left:698.80px;top:33.94px;font-size:10px;color:#f0f0f0;transform:scaleX(1.0724);">0,4230</div>
<div class="t" style="left:744.00px;top:33.94px;font-size:10px;color:#f0f0f0;transform:scaleX(1.0724);">0,1997</div>
<div class="t" style="left:8.30px;top:49.78px;font-size:9px;color:#f4f4f4;font-weight:bold;transform:scaleX(1.1544);">Y</div>
<div class="t" style="left:95.20px;top:48.78px;font-size:10px;color:#f0f0f0;transform:scaleX(1.0724);">305,0896</div>
<div class="t" style="left:145.60px;top:48.78px;font-size:10px;color:#f0f0f0;transform:scaleX(1.0724);">237,1494</div>
<div class="t" style="left:196.80px;top:48.78px;font-size:10px;color:#f0f0f0;transform:scaleX(1.0724);">191,3139</div>
<div class="t" style="left:247.60px;top:48.78px;font-size:10px;color:#f0f0f0;transform:scaleX(1.0724);">148,6948</div>
<div class="t" style="left:298.00px;top:48.78px;font-size:10px;color:#f0f0f0;transform:scaleX(1.0724);">104,9782</div>
<div class="t" style="left:349.20px;top:48.78px;font-size:10px;color:#f0f0f0;transform:scaleX(1.0724);">0,2269</div>
<div class="t" style="left:387.80px;top:48.78px;font-size:10px;color:#f0f0f0;transform:scaleX(1.0724);">30,2610</div>
<div class="t" style="left:435.80px;top:48.78px;font-size:10px;color:#f0f0f0;transform:scaleX(1.0724);">105,5609</div>
<div class="t" style="left:486.80px;top:48.78px;font-size:10px;color:#f0f0f0;transform:scaleX(1.0724);">58,6738</div>
<div class="t" style="left:531.20px;top:48.78px;font-size:10px;color:#f0f0f0;transform:scaleX(1.0724);">40,8502</div>
<div class="t" style="left:575.90px;top:48.78px;font-size:10px;color:#f0f0f0;transform:scaleX(1.0724);">72,2953</div>
<div class="t" style="left:635.50px;top:48.78px;font-size:10px;color:#f0f0f0;transform:scaleX(1.0724);">129,4571</div>
<div class="t" style="left:698.80px;top:48.78px;font-size:10px;color:#f0f0f0;transform:scaleX(1.0724);">83,5288</div>
<div class="t" style="left:744.00px;top:48.78px;font-size:10px;color:#f0f0f0;transform:scaleX(1.0724);">36,1783</div>
<div class="t" style="left:8.30px;top:64.62px;font-size:9px;color:#f4f4f4;font-weight:bold;transform:scaleX(1.1544);">Target x:CIE31</div>
<div class="t" style="left:95.20px;top:63.62px;font-size:10px;color:#f0f0f0;transform:scaleX(1.0724);">0,3127</div>
<div class="t" style="left:145.60px;top:63.62px;font-size:10px;color:#f0f0f0;transform:scaleX(1.0724);">0,3127</div>
<div class="t" style="left:196.80px;top:63.62px;font-size:10px;color:#f0f0f0;transform:scaleX(1.0724);">0,3127</div>
<div class="t" style="left:247.60px;top:63.62px;font-size:10px;color:#f0f0f0;transform:scaleX(1.0724);">0,3127</div>
<div class="t" style="left:298.00px;top:63.62px;font-size:10px;color:#f0f0f0;transform:scaleX(1.0724);">0,3127</div>
<div class="t" style="left:349.20px;top:63.62px;font-size:10px;color:#f0f0f0;transform:scaleX(1.0724);">0,3127</div>
<div class="t" style="left:387.80px;top:63.62px;font-size:10px;color:#f0f0f0;transform:scaleX(1.0724);">0,4003</div>
<div class="t" style="left:435.80px;top:63.62px;font-size:10px;color:#f0f0f0;transform:scaleX(1.0724);">0,3795</div>
<div class="t" style="left:486.80px;top:63.62px;font-size:10px;color:#f0f0f0;transform:scaleX(1.0724);">0,2496</div>
<div class="t" style="left:531.20px;top:63.62px;font-size:10px;color:#f0f0f0;transform:scaleX(1.0724);">0,3395</div>
<div class="t" style="left:575.90px;top:63.62px;font-size:10px;color:#f0f0f0;transform:scaleX(1.0724);">0,2681</div>
<div class="t" style="left:635.50px;top:63.62px;font-size:10px;color:#f0f0f0;transform:scaleX(1.0724);">0,2626</div>
<div class="t" style="left:698.80px;top:63.62px;font-size:10px;color:#f0f0f0;transform:scaleX(1.0724);">0,5122</div>
<div class="t" style="left:744.00px;top:63.62px;font-size:10px;color:#f0f0f0;transform:scaleX(1.0724);">0,2166</div>
<div class="t" style="left:8.30px;top:79.46px;font-size:9px;color:#f4f4f4;font-weight:bold;transform:scaleX(1.1544);">Target y:CIE31</div>
<div class="t" style="left:95.20px;top:78.46px;font-size:10px;color:#f0f0f0;transform:scaleX(1.0724);">0,3290</div>
<div class="t" style="left:145.60px;top:78.46px;font-size:10px;color:#f0f0f0;transform:scaleX(1.0724);">0,3290</div>
<div class="t" style="left:196.80px;top:78.46px;font-size:10px;color:#f0f0f0;transform:scaleX(1.0724);">0,3290</div>
<div class="t" style="left:247.60px;top:78.46px;font-size:10px;color:#f0f0f0;transform:scaleX(1.0724);">0,3290</div>
<div class="t" style="left:298.00px;top:78.46px;font-size:10px;color:#f0f0f0;transform:scaleX(1.0724);">0,3290</div>
<div class="t" style="left:349.20px;top:78.46px;font-size:10px;color:#f0f0f0;transform:scaleX(1.0724);">0,3290</div>
<div class="t" style="left:387.80px;top:78.46px;font-size:10px;color:#f0f0f0;transform:scaleX(1.0724);">0,3642</div>
<div class="t" style="left:435.80px;top:78.46px;font-size:10px;color:#f0f0f0;transform:scaleX(1.0724);">0,3562</div>
<div class="t" style="left:486.80px;top:78.46px;font-size:10px;color:#f0f0f0;transform:scaleX(1.0724);">0,2656</div>
<div class="t" style="left:531.20px;top:78.46px;font-size:10px;color:#f0f0f0;transform:scaleX(1.0724);">0,4271</div>
<div class="t" style="left:575.90px;top:78.46px;font-size:10px;color:#f0f0f0;transform:scaleX(1.0724);">0,2525</div>
<div class="t" style="left:635.50px;top:78.46px;font-size:10px;color:#f0f0f0;transform:scaleX(1.0724);">0,3616</div>
<div class="t" style="left:698.80px;top:78.46px;font-size:10px;color:#f0f0f0;transform:scaleX(1.0724);">0,4063</div>
<div class="t" style="left:744.00px;top:78.46px;font-size:10px;color:#f0f0f0;transform:scaleX(1.0724);">0,1920</div>
<div class="t" style="left:8.30px;top:94.30px;font-size:9px;color:#f4f4f4;font-weight:bold;transform:scaleX(1.1544);">Target Y</div>
<div class="t" style="left:95.20px;top:93.30px;font-size:10px;color:#f0f0f0;transform:scaleX(1.0724);">305,0896</div>
<div class="t" style="left:145.60px;top:93.30px;font-size:10px;color:#f0f0f0;transform:scaleX(1.0724);">241,4168</div>
<div class="t" style="left:196.80px;top:93.30px;font-size:10px;color:#f0f0f0;transform:scaleX(1.0724);">194,5242</div>
<div class="t" style="left:247.60px;top:93.30px;font-size:10px;color:#f0f0f0;transform:scaleX(1.0724);">149,8054</div>
<div class="t" style="left:298.00px;top:93.30px;font-size:10px;color:#f0f0f0;transform:scaleX(1.0724);">104,3145</div>
<div class="t" style="left:349.20px;top:93.30px;font-size:10px;color:#f0f0f0;transform:scaleX(1.0724);">0,0000</div>
<div class="t" style="left:387.80px;top:93.30px;font-size:10px;color:#f0f0f0;transform:scaleX(1.0724);">30,7326</div>
<div class="t" style="left:435.80px;top:93.30px;font-size:10px;color:#f0f0f0;transform:scaleX(1.0724);">106,4615</div>
<div class="t" style="left:486.80px;top:93.30px;font-size:10px;color:#f0f0f0;transform:scaleX(1.0724);">57,0468</div>
<div class="t" style="left:531.20px;top:93.30px;font-size:10px;color:#f0f0f0;transform:scaleX(1.0724);">39,7607</div>
<div class="t" style="left:575.90px;top:93.30px;font-size:10px;color:#f0f0f0;transform:scaleX(1.0724);">71,1423</div>
<div class="t" style="left:635.50px;top:93.30px;font-size:10px;color:#f0f0f0;transform:scaleX(1.0724);">127,7502</div>
<div class="t" style="left:698.80px;top:93.30px;font-size:10px;color:#f0f0f0;transform:scaleX(1.0724);">86,4863</div>
<div class="t" style="left:744.00px;top:93.30px;font-size:10px;color:#f0f0f0;transform:scaleX(1.0724);">35,8591</div>
<div class="t" style="left:8.30px;top:109.14px;font-size:9px;color:#f4f4f4;font-weight:bold;transform:scaleX(1.1544);">ΔE 2000</div>
<div class="t" style="left:95.20px;top:108.14px;font-size:10px;color:#f0f0f0;transform:scaleX(1.0724);">5,4015</div>
<div class="t" style="left:145.60px;top:108.14px;font-size:10px;color:#f0f0f0;transform:scaleX(1.0724);">5,5828</div>
<div class="t" style="left:196.80px;top:108.14px;font-size:10px;color:#f0f0f0;transform:scaleX(1.0724);">5,5972</div>
<div class="t" style="left:247.60px;top:108.14px;font-size:10px;color:#f0f0f0;transform:scaleX(1.0724);">5,5943</div>
<div class="t" style="left:298.00px;top:108.14px;font-size:10px;color:#f0f0f0;transform:scaleX(1.0724);">5,6155</div>
<div class="t" style="left:349.20px;top:108.14px;font-size:10px;color:#f0f0f0;transform:scaleX(1.0724);">0,8078</div>
<div class="t" style="left:387.80px;top:108.14px;font-size:10px;color:#f0f0f0;transform:scaleX(1.0724);">3,8345</div>
<div class="t" style="left:435.80px;top:108.14px;font-size:10px;color:#f0f0f0;transform:scaleX(1.0724);">4,2691</div>
<div class="t" style="left:486.80px;top:108.14px;font-size:10px;color:#f0f0f0;transform:scaleX(1.0724);">4,1805</div>
<div class="t" style="left:531.20px;top:108.14px;font-size:10px;color:#f0f0f0;transform:scaleX(1.0724);">3,2195</div>
<div class="t" style="left:575.90px;top:108.14px;font-size:10px;color:#f0f0f0;transform:scaleX(1.0724);">2,3518</div>
<div class="t" style="left:635.50px;top:108.14px;font-size:10px;color:#f0f0f0;transform:scaleX(1.0724);">3,4033</div>
<div class="t" style="left:698.80px;top:108.14px;font-size:10px;color:#f0f0f0;transform:scaleX(1.0724);">4,6592</div>
<div class="t" style="left:744.00px;top:108.14px;font-size:10px;color:#f0f0f0;transform:scaleX(1.0724);">1,7492</div>
<div class="t" style="left:104.00px;top:5.00px;font-size:9px;color:#f0f0f0;font-weight:bold;transform:scaleX(1.1104);">White</div>
<div class="t" style="left:150.06px;top:5.00px;font-size:9px;color:#f0f0f0;font-weight:bold;transform:scaleX(1.1104);">Gray 80</div>
<div class="t" style="left:200.46px;top:5.00px;font-size:9px;color:#f0f0f0;font-weight:bold;transform:scaleX(1.1104);">Gray 65</div>
<div class="t" style="left:251.66px;top:5.00px;font-size:9px;color:#f0f0f0;font-weight:bold;transform:scaleX(1.1104);">Gray 50</div>
<div class="t" style="left:302.06px;top:5.00px;font-size:9px;color:#f0f0f0;font-weight:bold;transform:scaleX(1.1104);">Gray 35</div>
<div class="t" style="left:351.87px;top:5.00px;font-size:9px;color:#f0f0f0;font-weight:bold;transform:scaleX(1.1104);">Black</div>
<div class="t" style="left:385.75px;top:5.00px;font-size:9px;color:#f0f0f0;font-weight:bold;transform:scaleX(1.1104);">Dark Skin</div>
<div class="t" style="left:434.15px;top:5.00px;font-size:9px;color:#f0f0f0;font-weight:bold;transform:scaleX(1.1104);">Light Skin</div>
<div class="t" style="left:484.69px;top:5.00px;font-size:9px;color:#f0f0f0;font-weight:bold;transform:scaleX(1.1104);">Blue Sky</div>
<div class="t" style="left:532.61px;top:5.00px;font-size:9px;color:#f0f0f0;font-weight:bold;transform:scaleX(1.1104);">Foliage</div>
<div class="t" style="left:574.18px;top:5.00px;font-size:9px;color:#f0f0f0;font-weight:bold;transform:scaleX(1.1104);">Blue Flower</div>
<div class="t" style="left:633.20px;top:5.00px;font-size:9px;color:#f0f0f0;font-weight:bold;transform:scaleX(1.1104);">Bluish Green</div>
<div class="t" style="left:701.01px;top:5.00px;font-size:9px;color:#f0f0f0;font-weight:bold;transform:scaleX(1.1104);">Orange</div>
<div class="t" style="left:744.00px;top:5.00px;font-size:9px;color:#f0f0f0;font-weight:bold;transform:scaleX(1.1104);">Purplish Blue</div>
</div>
<div class="a" style="left:191.2px;top:502.6px;width:774.1px;height:9.6px;background:#575757"></div>
<div class="a" style="left:191.5px;top:503.3px;width:9.5px;height:8.4px;background:#6e6e6e;border-radius:1px"></div>
<div class="a" style="left:194.5px;top:505px;width:0;height:0;border-top:2.6px solid transparent;border-bottom:2.6px solid transparent;border-right:3px solid #2a2a2a"></div>
<div class="a" style="left:204px;top:504.3px;width:433px;height:6.6px;background:#434343;border-radius:3.3px"></div>
<div class="a" style="left:955px;top:503.3px;width:9.8px;height:8.4px;background:#6e6e6e;border-radius:1px"></div>
<div class="a" style="left:958.6px;top:505px;width:0;height:0;border-top:2.6px solid transparent;border-bottom:2.6px solid transparent;border-left:3px solid #2a2a2a"></div>
<div class="a" style="left:0;top:512.5px;width:972px;height:33.5px;background:#262626"></div>
<div class="sw" style="left:1.10px;"><div class="swc" style="background:#ffffff;"></div></div>
<div class="t" style="left:9.57px;top:539.00px;font-size:6.4px;color:#1c1c1c;transform:scaleX(0.9200);">White</div>
<div class="sw" style="left:34.75px;"><div class="swc" style="background:#e3e3e3;"></div></div>
<div class="t" style="left:40.28px;top:539.00px;font-size:6.4px;color:#1c1c1c;transform:scaleX(0.9200);">Gray 80</div>
<div class="sw" style="left:68.40px;"><div class="swc" style="background:#d1d1d1;"></div></div>
<div class="t" style="left:73.93px;top:539.00px;font-size:6.4px;color:#1c1c1c;transform:scaleX(0.9200);">Gray 65</div>
<div class="sw" style="left:102.05px;"><div class="swc" style="background:#bdbdbd;"></div></div>
<div class="t" style="left:107.58px;top:539.00px;font-size:6.4px;color:#1c1c1c;transform:scaleX(0.9200);">Gray 50</div>
<div class="sw" style="left:135.70px;"><div class="swc" style="background:#a3a3a3;"></div></div>
<div class="t" style="left:141.23px;top:539.00px;font-size:6.4px;color:#1c1c1c;transform:scaleX(0.9200);">Gray 35</div>
<div class="sw" style="left:169.35px;"><div class="swc" style="background:#000000;"></div></div>
<div class="t" style="left:178.15px;top:539.00px;font-size:6.4px;color:#1c1c1c;transform:scaleX(0.9200);">Black</div>
<div class="sw" style="left:203.00px;"><div class="swc" style="background:#7b4f41;"></div></div>
<div class="t" style="left:206.24px;top:539.00px;font-size:6.4px;color:#1c1c1c;transform:scaleX(0.9200);">Dark Skin</div>
<div class="sw" style="left:236.65px;"><div class="swc" style="background:#c99483;"></div></div>
<div class="t" style="left:239.72px;top:539.00px;font-size:6.4px;color:#1c1c1c;transform:scaleX(0.9200);">Light Skin</div>
<div class="sw" style="left:270.30px;"><div class="swc" style="background:#5b7fb0;"></div></div>
<div class="t" style="left:274.68px;top:539.00px;font-size:6.4px;color:#1c1c1c;transform:scaleX(0.9200);">Blue Sky</div>
<div class="sw" style="left:303.95px;"><div class="swc" style="background:#566e3f;"></div></div>
<div class="t" style="left:310.29px;top:539.00px;font-size:6.4px;color:#1c1c1c;transform:scaleX(0.9200);">Foliage</div>
<div class="sw" style="left:337.60px;"><div class="swc" style="background:#8b88c0;"></div></div>
<div class="t" style="left:338.35px;top:539.00px;font-size:6.4px;color:#1c1c1c;transform:scaleX(0.9026);">Blue Flower</div>
<div class="sw" style="left:371.25px;"><div class="swc" style="background:#62c5ad;"></div></div>
<div class="t" style="left:372.00px;top:539.00px;font-size:6.4px;color:#1c1c1c;transform:scaleX(0.8244);">Bluish Green</div>
<div class="sw" style="left:404.90px;"><div class="swc" style="background:#dd7a2e;"></div></div>
<div class="t" style="left:411.08px;top:539.00px;font-size:6.4px;color:#1c1c1c;transform:scaleX(0.9200);">Orange</div>
<div class="sw" style="left:438.55px;"><div class="swc" style="background:#4b5ba8;height:12px;"></div></div>
<div class="t" style="left:443.91px;top:533.30px;font-size:6.4px;color:#1c1c1c;transform:scaleX(0.9200);">Purplish</div>
<div class="t" style="left:443.91px;top:539.20px;font-size:6.4px;color:#1c1c1c;transform:scaleX(0.9200);">Blue</div>
<div class="sw" style="left:472.20px;"><div class="swc" style="background:#c85262;height:12px;"></div></div>
<div class="t" style="left:475.76px;top:533.30px;font-size:6.4px;color:#1c1c1c;transform:scaleX(0.9200);">Moderate</div>
<div class="t" style="left:475.76px;top:539.20px;font-size:6.4px;color:#1c1c1c;transform:scaleX(0.9200);">Red</div>
<div class="sw" style="left:505.85px;"><div class="swc" style="background:#5f3a73;"></div></div>
<div class="t" style="left:513.34px;top:539.00px;font-size:6.4px;color:#1c1c1c;transform:scaleX(0.9200);">Purple</div>
<div class="sw" style="left:539.50px;"><div class="swc" style="background:#a5c244;height:12px;"></div></div>
<div class="t" style="left:547.10px;top:533.30px;font-size:6.4px;color:#1c1c1c;transform:scaleX(0.9200);">Yellow</div>
<div class="t" style="left:547.10px;top:539.20px;font-size:6.4px;color:#1c1c1c;transform:scaleX(0.9200);">Green</div>
<div class="sw" style="left:573.15px;"><div class="swc" style="background:#eea32d;height:12px;"></div></div>
<div class="t" style="left:579.33px;top:533.30px;font-size:6.4px;color:#1c1c1c;transform:scaleX(0.9200);">Orange</div>
<div class="t" style="left:579.33px;top:539.20px;font-size:6.4px;color:#1c1c1c;transform:scaleX(0.9200);">Yellow</div>
<div class="sw" style="left:606.80px;"><div class="swc" style="background:#2e3ea0;"></div></div>
<div class="t" style="left:616.91px;top:539.00px;font-size:6.4px;color:#1c1c1c;transform:scaleX(0.9200);">Blue</div>
<div class="sw" style="left:640.45px;"><div class="swc" style="background:#46a04a;"></div></div>
<div class="t" style="left:648.27px;top:539.00px;font-size:6.4px;color:#1c1c1c;transform:scaleX(0.9200);">Green</div>
<div class="sw" style="left:674.10px;"><div class="swc" style="background:#c33038;"></div></div>
<div class="t" style="left:684.70px;top:539.00px;font-size:6.4px;color:#1c1c1c;transform:scaleX(0.9200);">Red</div>
<div class="sw" style="left:707.75px;"><div class="swc" style="background:#efc92e;"></div></div>
<div class="t" style="left:715.35px;top:539.00px;font-size:6.4px;color:#1c1c1c;transform:scaleX(0.9200);">Yellow</div>
<div class="sw" style="left:741.40px;"><div class="swc" style="background:#bf5598;"></div></div>
<div class="t" style="left:745.94px;top:539.00px;font-size:6.4px;color:#1c1c1c;transform:scaleX(0.9200);">Magenta</div>
<div class="sw" style="left:775.05px;background:#2e2e2e;box-shadow:inset 0 0 0 1px #222;"><div class="swc" style="background:#0088a8;"></div></div>
<div class="t" style="left:784.65px;top:538.80px;font-size:6.6px;color:#f2f2f2;transform:scaleX(0.8307);">Cyan</div>
<div class="a" style="left:808.5px;top:515px;width:163.5px;height:31px;background:#2a2a2a"></div>
<div class="a" style="left:808.8px;top:515.6px;width:23.4px;height:8.8px;background:linear-gradient(#b0b0b0,#8c8c8c);border-radius:2px 2px 0 0"></div>
<div class="a" style="left:816.5px;top:516.6px;width:8px;height:6.5px;border-radius:50%;background:radial-gradient(#aaa 40%,#8a8a8a 60%,#a5a5a5)"></div><div class="a" style="left:818.2px;top:518.6px;width:4.6px;height:2.3px;border-radius:2.3px 2.3px 0 0;background:#333"></div>
<div class="a" style="left:808.8px;top:525px;width:23.4px;height:21px;background:linear-gradient(#8e8e8e,#6c6c6c)"></div>
<div class="a" style="left:813.2px;top:528.2px;width:14.8px;height:14.4px;border-radius:2px;background:linear-gradient(#383838 0%,#2e2e2e 50%,#111 51%,#151515);box-shadow:0 0 1px #000"></div>
<div class="btn" style="left:834px;top:515px;width:23px;height:15.6px"></div>
<div class="a" style="left:840.5px;top:517.8px;width:10px;height:10px;border-radius:50%;background:radial-gradient(#a4a4a4 52%,#7e7e7e 72%,#a0a0a0)"></div>
<div class="btn" style="left:857px;top:515px;width:23px;height:15.6px"></div>
<div class="a" style="left:863.5px;top:517.8px;width:10px;height:10px;border-radius:50%;background:radial-gradient(#a4a4a4 52%,#7e7e7e 72%,#a0a0a0)"></div>
<div class="btn" style="left:880px;top:515px;width:23px;height:15.6px"></div>
<div class="a" style="left:886.5px;top:517.8px;width:10px;height:10px;border-radius:50%;background:radial-gradient(#a4a4a4 52%,#7e7e7e 72%,#a0a0a0)"></div>
<div class="btn" style="left:903px;top:515px;width:23px;height:15.6px"></div>
<div class="a" style="left:909.5px;top:517.8px;width:10px;height:10px;border-radius:50%;background:radial-gradient(#a4a4a4 52%,#7e7e7e 72%,#a0a0a0)"></div>
<div class="a" style="left:843.5px;top:520.8px;width:4px;height:4px;background:#222"></div>
<div class="a" style="left:867px;top:519.8px;width:0;height:0;border-top:3px solid transparent;border-bottom:3px solid transparent;border-left:4px solid #222"></div>
<svg class="a" style="left:886px;top:518.8px" width="11" height="8"><path d="M2.5 1v6M8.5 1v6M2.5 4h6" stroke="#333" stroke-width="1.1" fill="none"/></svg>
<svg class="a" style="left:909px;top:519.8px" width="11" height="6"><path d="M5.5 3c-1-1.7-4-1.7-4 0s3 1.7 4 0c1-1.7 4-1.7 4 0s-3 1.7-4 0z" stroke="#555" stroke-width="1" fill="none"/></svg>
<div class="a" style="left:925.5px;top:515px;width:46.5px;height:15.6px;background:linear-gradient(#3a3a3a,#2e2e2e)"></div>
<div class="a" style="left:948.5px;top:515px;width:1px;height:15.6px;background:#262626"></div>
<div class="a" style="left:932px;top:517.8px;width:10px;height:10px;border-radius:50%;background:radial-gradient(#3a3a3a 55%,#333 75%,#444)"></div>
<div class="a" style="left:955px;top:517.8px;width:10px;height:10px;border-radius:50%;background:radial-gradient(#3a3a3a 55%,#333 75%,#444)"></div>
<svg class="a" style="left:933px;top:518.8px" width="8" height="8"><path d="M6.2 2.6A2.6 2.6 0 1 0 6.4 5.2M6.6 1v2h-2" stroke="#151515" stroke-width="1" fill="none"/></svg>
<svg class="a" style="left:956px;top:518.8px" width="8" height="8"><path d="M1.5 4.2l2 2 3.3-4" stroke="#151515" stroke-width="1.1" fill="none"/></svg>
<div class="btn" style="left:834px;top:530.6px;width:68.5px;height:15.4px"></div>
<div class="btn" style="left:902.5px;top:530.6px;width:69.5px;height:15.4px;border-right:none"></div>
<div class="a" style="left:844.5px;top:534.3px;width:9px;height:9px;border-radius:50%;background:radial-gradient(#a4a4a4 52%,#7e7e7e 72%,#a0a0a0)"></div>
<div class="a" style="left:952px;top:534.3px;width:9px;height:9px;border-radius:50%;background:radial-gradient(#a4a4a4 52%,#7e7e7e 72%,#a0a0a0)"></div>
<div class="t" style="left:846.50px;top:534.60px;font-size:9px;color:#3a3a3a;">«</div>
<div class="t" style="left:954.00px;top:534.60px;font-size:9px;color:#3a3a3a;">»</div>
<div class="t" style="left:862.20px;top:534.00px;font-size:11.6px;color:#383838;">Back</div>
<div class="t" style="left:916.60px;top:534.00px;font-size:11.6px;color:#383838;transform:scaleX(1.0733);">Next</div>
</div>
</body></html>
